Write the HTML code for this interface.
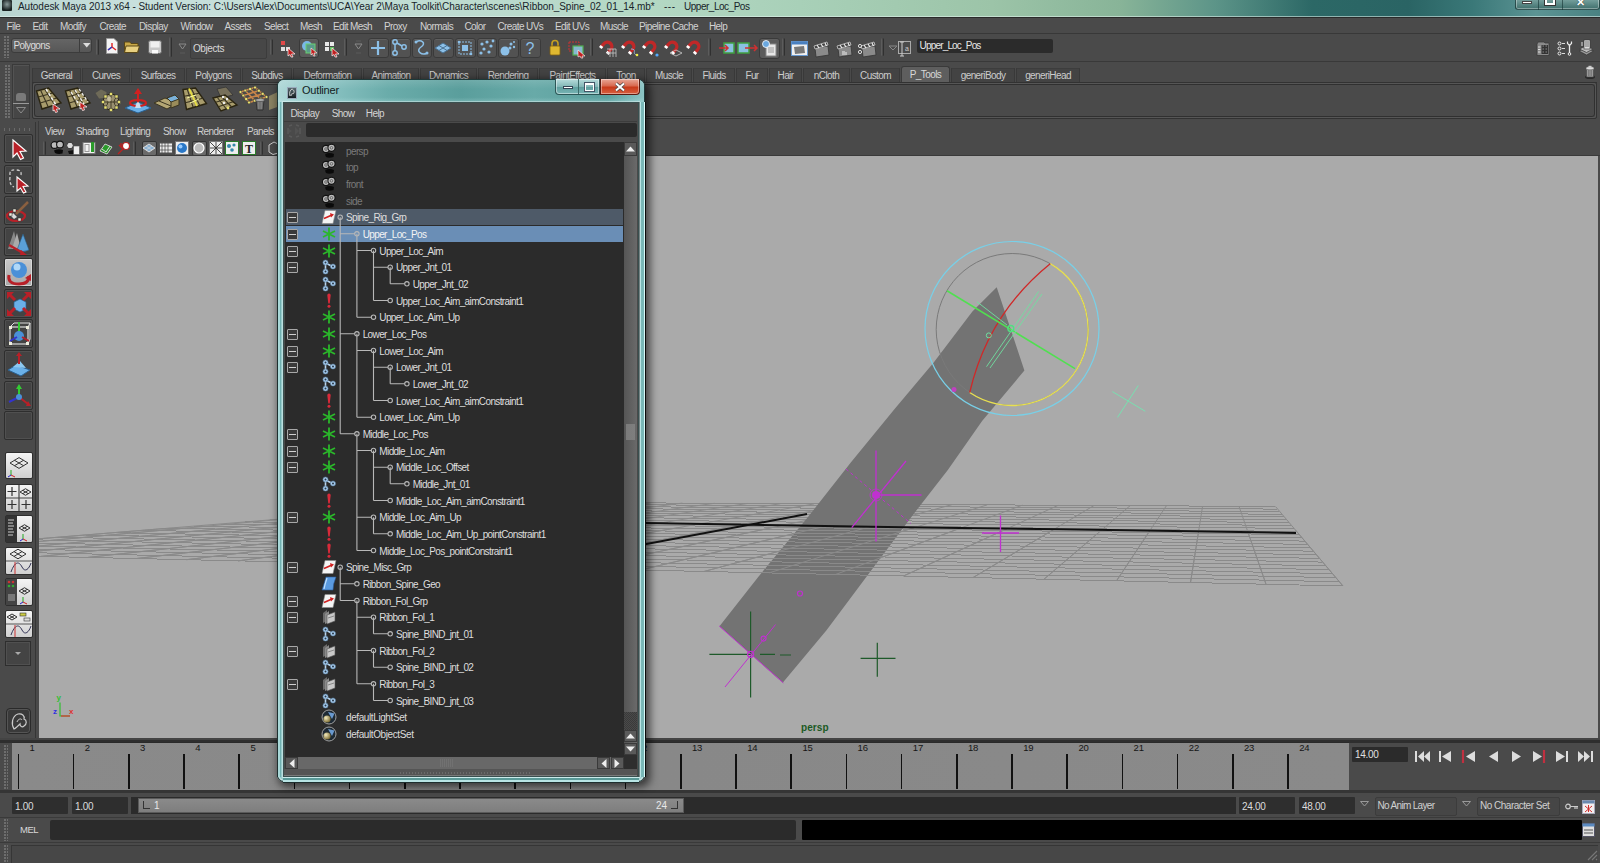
<!DOCTYPE html><html><head><meta charset="utf-8"><style>*{margin:0;padding:0;box-sizing:border-box}
html,body{width:1600px;height:863px;overflow:hidden;background:#4a4a4a;font-family:"Liberation Sans",sans-serif;font-size:10px;color:#cfcfcf;position:relative}
.a{position:absolute}
svg.a{overflow:visible}
.t{position:absolute;white-space:pre;letter-spacing:-0.6px;line-height:12px;font-size:10px}
#title{left:0;top:0;width:1600px;height:18px;overflow:hidden;background:linear-gradient(90deg,#b8d4d0 0%,#c8e0dc 8%,#c0dcd4 25%,#b4d8c4 40%,#a8d0b8 50%,#9cc4a8 62%,#88b498 70%,#5c9488 76%,#2c6866 82%,#2a6464 88%,#3a7878 92%,#5c9494 96%,#4a8282 100%)}
#menubar{left:0;top:18px;width:1600px;height:15px;background:#4a4a4a}
#status{left:0;top:33px;width:1600px;height:28px;background:#4a4a4a}
#shelf{left:0;top:61px;width:1600px;height:60px;background:#4a4a4a}
#tool{left:0;top:121px;width:38px;height:617px;background:#4a4a4a}
#panelmenu{left:38px;top:121px;width:1562px;height:35px;background:#4a4a4a}
#vp{left:39px;top:156px;width:1559px;height:582px;background:#aaaaaa}
#timeline{left:0;top:738px;width:1600px;height:125px;background:#4a4a4a}
</style></head><body><div class="a" id="title"><div class="a" style="left:2px;top:0px;width:10px;height:11px;background:radial-gradient(circle at 50% 40%,#8a9a9a,#1a2222 70%);border-radius:1px"></div><div class="t" style="left:18px;top:0.5px;color:#18242a;font-size:10px;letter-spacing:-0.05px;">Autodesk Maya 2013 x64 - Student Version: C:\Users\Alex\Documents\UCA\Year 2\Maya Toolkit\Character\scenes\Ribbon_Spine_02_01_14.mb*</div><div class="t" style="left:664px;top:0.5px;color:#18242a;font-size:10px;letter-spacing:0.5px;">---</div><div class="t" style="left:684px;top:0.5px;color:#18242a;font-size:10px;letter-spacing:-0.48px;">Upper_Loc_Pos</div><div class="a" style="left:1515px;top:-3px;width:85px;height:13px;border:1px solid rgba(20,50,50,.7);border-radius:3px;background:linear-gradient(#7fa9a6,#3f6f6c);box-shadow:inset 0 0 0 1px rgba(255,255,255,.35)"></div><div class="a" style="left:1538px;top:-2px;width:1px;height:12px;background:rgba(20,50,50,.6)"></div><div class="a" style="left:1562px;top:-2px;width:1px;height:12px;background:rgba(20,50,50,.6)"></div><div class="a" style="left:1522px;top:1px;width:10px;height:3px;background:#fff;border:1px solid #444"></div><div class="a" style="left:1545px;top:-2px;width:10px;height:7px;border:2px solid #fff;outline:1px solid #333"></div><div class="t" style="left:1576px;top:-4px;color:#fff;font-size:11px;letter-spacing:0px;font-weight:bold;text-shadow:0 0 1px #000">✕</div><div class="a" style="left:0px;top:16px;width:1600px;height:1px;background:rgba(230,245,240,.55)"></div><div class="a" style="left:0px;top:17px;width:1600px;height:1px;background:#2a2a2a"></div></div><div class="a" id="menubar"><div class="t" style="left:6.5px;top:3px;color:#d2d2d2;">File</div><div class="t" style="left:32.5px;top:3px;color:#d2d2d2;">Edit</div><div class="t" style="left:60px;top:3px;color:#d2d2d2;">Modify</div><div class="t" style="left:99.5px;top:3px;color:#d2d2d2;">Create</div><div class="t" style="left:139px;top:3px;color:#d2d2d2;">Display</div><div class="t" style="left:180.5px;top:3px;color:#d2d2d2;">Window</div><div class="t" style="left:224.5px;top:3px;color:#d2d2d2;">Assets</div><div class="t" style="left:264px;top:3px;color:#d2d2d2;">Select</div><div class="t" style="left:300px;top:3px;color:#d2d2d2;">Mesh</div><div class="t" style="left:333px;top:3px;color:#d2d2d2;">Edit Mesh</div><div class="t" style="left:384px;top:3px;color:#d2d2d2;">Proxy</div><div class="t" style="left:420px;top:3px;color:#d2d2d2;">Normals</div><div class="t" style="left:464.5px;top:3px;color:#d2d2d2;">Color</div><div class="t" style="left:497.5px;top:3px;color:#d2d2d2;">Create UVs</div><div class="t" style="left:555px;top:3px;color:#d2d2d2;">Edit UVs</div><div class="t" style="left:600px;top:3px;color:#d2d2d2;">Muscle</div><div class="t" style="left:639px;top:3px;color:#d2d2d2;">Pipeline Cache</div><div class="t" style="left:709px;top:3px;color:#d2d2d2;">Help</div></div><div class="a" id="status"><div class="a" style="left:0px;top:0px;width:1600px;height:1px;background:#383838"></div><div class="a" style="left:4px;top:3px;width:5px;height:22px;background:radial-gradient(circle at 1px 1px,#6e6e6e 0.9px,transparent 1.2px) 0 0/3px 3px"></div><div class="a" style="left:11px;top:5px;width:81px;height:15px;background:linear-gradient(#656565,#575757);border:1px solid #3c3c3c;border-radius:3px"></div><div class="a" style="left:79px;top:6px;width:1px;height:13px;background:#3c3c3c"></div><div class="t" style="left:13.5px;top:6.5px;color:#dcdcdc;font-size:10px;letter-spacing:-0.63px;">Polygons</div><svg class="a" style="left:82.5px;top:10px" width="8" height="5"><path d="M0 0H7.5L3.75 4.5Z" fill="#ddd"/></svg><div class="a" style="left:96px;top:6px;width:3px;height:16px;border-left:1px solid #5c5c5c;border-right:1px solid #303030;border-radius:2px"></div><svg class="a" style="left:106px;top:5px" width="12" height="16"><path d="M0.5 0.5H8L11.5 4V15.5H0.5Z" fill="#f4f4f4" stroke="#999"/><path d="M6 5V9L2 12M6 9L10 12" stroke="#e02020" stroke-width="1.4" fill="none"/><path d="M6 9L2 12" stroke="#2040d0" stroke-width="1.4"/></svg><svg class="a" style="left:124px;top:7px" width="16" height="13"><path d="M0.5 2H6L7 3.5H14V12.5H0.5Z" fill="#c8a848" stroke="#5a4818"/><path d="M2 6H15.5L13.5 12.5H0.5Z" fill="#e8d080" stroke="#5a4818"/></svg><svg class="a" style="left:148px;top:7px" width="14" height="14"><rect x="0.5" y="0.5" width="13" height="13" rx="2" fill="#c8c8c8" stroke="#666"/><rect x="2.5" y="1.5" width="9" height="6" fill="#f0f0f0"/><rect x="4" y="10" width="6" height="3.5" fill="#fafafa"/></svg><div class="a" style="left:169px;top:4px;width:3px;height:20px;border-left:1px solid #5c5c5c;border-right:1px solid #303030;border-radius:2px"></div><svg class="a" style="left:178px;top:7px" width="9" height="16"><path d="M1 4H8L4.5 9Z" fill="none" stroke="#8a8a8a"/><path d="M2 1H7M2 13H7" stroke="#5a5a5a"/></svg><div class="a" style="left:190px;top:4.5px;width:77px;height:21px;border:1px solid #3c3c3c;border-radius:2px;background:#474747"></div><div class="t" style="left:193px;top:10px;color:#d8d8d8;font-size:10px;letter-spacing:-0.41px;">Objects</div><div class="a" style="left:270px;top:6px;width:3px;height:16px;border-left:1px solid #5c5c5c;border-right:1px solid #303030;border-radius:2px"></div><svg class="a" style="left:280px;top:8px" width="16" height="16"><rect x="1" y="0" width="4" height="4" fill="#e04848"/><rect x="1" y="6" width="4" height="4" fill="#ddd"/><rect x="6" y="6" width="4" height="4" fill="#ddd"/><path d="M8 7L15 13L11.5 13L13 16L11 16L10 13.5L8 15Z" fill="#c02020" stroke="#fff" stroke-width=".7"/></svg><div class="a" style="left:299px;top:4.5px;width:20px;height:20px;background:#5b5b5b;border:1px solid #3a3a3a;border-radius:3px;box-shadow:inset 0 1px 0 #5f5f5f"></div><svg class="a" style="left:301px;top:7px" width="18" height="16"><circle cx="6" cy="6" r="5" fill="#7ab8e8"/><rect x="5" y="4" width="9" height="9" fill="#5a9a8a" stroke="#6ad070"/><path d="M10 8L16 13L13 13L14 16L12.5 16L11.5 13.5L10 15Z" fill="#c02020" stroke="#fff" stroke-width=".6"/></svg><svg class="a" style="left:324px;top:8px" width="16" height="16"><rect x="1" y="1" width="4" height="4" fill="#e8e8e8"/><rect x="6" y="1" width="4" height="4" fill="#e8e8e8"/><rect x="1" y="6" width="4" height="4" fill="#e8e8e8"/><rect x="6" y="6" width="4" height="4" fill="#60c060"/><path d="M8 7L15 13L11.5 13L13 16L11 16L10 13.5L8 15Z" fill="#c02020" stroke="#fff" stroke-width=".7"/></svg><div class="a" style="left:344px;top:5px;width:3px;height:18px;border-left:1px solid #5c5c5c;border-right:1px solid #303030;border-radius:2px"></div><svg class="a" style="left:354px;top:7px" width="9" height="16"><path d="M1 4H8L4.5 9Z" fill="none" stroke="#8a8a8a"/><path d="M2 1H7M2 13H7" stroke="#5a5a5a"/></svg><div class="a" style="left:368px;top:4.5px;width:20.5px;height:20px;background:#525252;border:1px solid #3a3a3a;border-radius:3px;box-shadow:inset 0 1px 0 #5f5f5f"></div><div class="a" style="left:390px;top:4.5px;width:20.5px;height:20px;background:#525252;border:1px solid #3a3a3a;border-radius:3px;box-shadow:inset 0 1px 0 #5f5f5f"></div><div class="a" style="left:411.5px;top:4.5px;width:20.5px;height:20px;background:#525252;border:1px solid #3a3a3a;border-radius:3px;box-shadow:inset 0 1px 0 #5f5f5f"></div><div class="a" style="left:433px;top:4.5px;width:20.5px;height:20px;background:#525252;border:1px solid #3a3a3a;border-radius:3px;box-shadow:inset 0 1px 0 #5f5f5f"></div><div class="a" style="left:455px;top:4.5px;width:20.5px;height:20px;background:#525252;border:1px solid #3a3a3a;border-radius:3px;box-shadow:inset 0 1px 0 #5f5f5f"></div><div class="a" style="left:476.5px;top:4.5px;width:20.5px;height:20px;background:#525252;border:1px solid #3a3a3a;border-radius:3px;box-shadow:inset 0 1px 0 #5f5f5f"></div><div class="a" style="left:498px;top:4.5px;width:20.5px;height:20px;background:#525252;border:1px solid #3a3a3a;border-radius:3px;box-shadow:inset 0 1px 0 #5f5f5f"></div><div class="a" style="left:520px;top:4.5px;width:20.5px;height:20px;background:#525252;border:1px solid #3a3a3a;border-radius:3px;box-shadow:inset 0 1px 0 #5f5f5f"></div><svg class="a" style="left:368px;top:4.5px" width="20" height="20"><path d="M10 3V17M3 10H17" stroke="#8cc0e8" stroke-width="2.2"/></svg><svg class="a" style="left:390px;top:4.5px" width="20" height="20"><circle cx="5" cy="4" r="2.2" fill="none" stroke="#8cc0e8" stroke-width="1.5"/><circle cx="5" cy="15" r="2.2" fill="none" stroke="#8cc0e8" stroke-width="1.5"/><circle cx="14" cy="9" r="2.2" fill="none" stroke="#8cc0e8" stroke-width="1.5"/><path d="M5 6V13M7 5L12 8" stroke="#8cc0e8" stroke-width="1.5"/></svg><svg class="a" style="left:411.5px;top:4.5px" width="20" height="20"><path d="M4 4C9 1 15 5 9 9C3 13 10 18 15 15" fill="none" stroke="#8cc0e8" stroke-width="1.5"/><circle cx="4" cy="4" r="1.5" fill="#8cc0e8"/><circle cx="15" cy="15" r="1.5" fill="#8cc0e8"/></svg><svg class="a" style="left:433px;top:4.5px" width="20" height="20"><path d="M2 10L10 5L18 10L10 15Z" fill="#8cc0e8" stroke="#4a7090"/><path d="M6 7.5L14 12.5M14 7.5L6 12.5" stroke="#4a7090"/></svg><svg class="a" style="left:455px;top:4.5px" width="20" height="20"><rect x="4" y="4" width="12" height="12" fill="none" stroke="#8cc0e8" stroke-dasharray="2 1"/><rect x="7" y="7" width="6" height="6" fill="#8cc0e8"/><circle cx="4" cy="4" r="1.3" fill="#8cc0e8"/><circle cx="16" cy="16" r="1.3" fill="#8cc0e8"/></svg><svg class="a" style="left:476.5px;top:4.5px" width="20" height="20"><circle cx="5" cy="6" r="1.6" fill="#8cc0e8"/><circle cx="10" cy="4" r="1.6" fill="#8cc0e8"/><circle cx="14" cy="8" r="1.6" fill="#8cc0e8"/><circle cx="7" cy="11" r="1.6" fill="#8cc0e8"/><circle cx="12" cy="14" r="1.6" fill="#8cc0e8"/><circle cx="4" cy="15" r="1.6" fill="#8cc0e8"/><circle cx="16" cy="3" r="1.4" fill="#8cc0e8"/></svg><svg class="a" style="left:498px;top:4.5px" width="20" height="20"><circle cx="7" cy="13" r="4.5" fill="#8cc0e8"/><circle cx="13" cy="6" r="1.5" fill="#8cc0e8"/><circle cx="16" cy="9" r="1.2" fill="#8cc0e8"/><circle cx="12" cy="10" r="1.5" fill="#8cc0e8"/><circle cx="16" cy="4" r="1" fill="#8cc0e8"/></svg><svg class="a" style="left:520px;top:4.5px" width="20" height="20"><text x="10" y="16" font-size="16" text-anchor="middle" fill="#8cc0e8" font-family="Liberation Sans">?</text></svg><svg class="a" style="left:549px;top:6px" width="12" height="17"><path d="M3 7V4.5A3 3 0 0 1 9 4.5V7" fill="none" stroke="#c8a020" stroke-width="1.6"/><rect x="1" y="7" width="10" height="9" rx="1" fill="#e0b830" stroke="#806010" stroke-width=".8"/></svg><svg class="a" style="left:568px;top:8px" width="18" height="17"><rect x="1" y="1" width="10" height="9" fill="none" stroke="#d03030" stroke-dasharray="2 1"/><rect x="5" y="5" width="10" height="9" fill="#88b8d0" stroke="#50b050" stroke-width="1.2"/><path d="M10 9L17 15L14 15L15 17L13 17L12 15L10 16Z" fill="#c02020" stroke="#fff" stroke-width=".6"/></svg><div class="a" style="left:590px;top:5px;width:3px;height:18px;border-left:1px solid #5c5c5c;border-right:1px solid #303030;border-radius:2px"></div><svg class="a" style="left:599px;top:6px" width="18" height="18"><g transform="rotate(40 8 8)"><path d="M3.5 12V7.5A4.5 4.5 0 0 1 12.5 7.5V12" stroke="#c02828" stroke-width="3.4" fill="none"/><rect x="1.8" y="10.5" width="3.4" height="2.6" fill="#fff"/><rect x="10.8" y="10.5" width="3.4" height="2.6" fill="#fff"/></g><path d="M8 10H17V18M8 14H17M11 10V18M14 10V18" stroke="#c8c8c8" stroke-width=".8" fill="none"/></svg><svg class="a" style="left:621px;top:6px" width="18" height="18"><g transform="rotate(40 8 8)"><path d="M3.5 12V7.5A4.5 4.5 0 0 1 12.5 7.5V12" stroke="#c02828" stroke-width="3.4" fill="none"/><rect x="1.8" y="10.5" width="3.4" height="2.6" fill="#fff"/><rect x="10.8" y="10.5" width="3.4" height="2.6" fill="#fff"/></g><path d="M10 10C17 10 10 15 16 16" stroke="#9ac" stroke-width="1" fill="none"/><circle cx="16" cy="16" r="1.3" fill="#ee4"/></svg><svg class="a" style="left:642px;top:6px" width="18" height="18"><g transform="rotate(40 8 8)"><path d="M3.5 12V7.5A4.5 4.5 0 0 1 12.5 7.5V12" stroke="#c02828" stroke-width="3.4" fill="none"/><rect x="1.8" y="10.5" width="3.4" height="2.6" fill="#fff"/><rect x="10.8" y="10.5" width="3.4" height="2.6" fill="#fff"/></g><circle cx="15" cy="16" r="1.6" fill="#5af"/></svg><svg class="a" style="left:664px;top:6px" width="18" height="18"><g transform="rotate(40 8 8)"><path d="M3.5 12V7.5A4.5 4.5 0 0 1 12.5 7.5V12" stroke="#c02828" stroke-width="3.4" fill="none"/><rect x="1.8" y="10.5" width="3.4" height="2.6" fill="#fff"/><rect x="10.8" y="10.5" width="3.4" height="2.6" fill="#fff"/></g><path d="M6 14L12 11L18 14L12 17Z" fill="none" stroke="#ccc" stroke-width=".8"/></svg><svg class="a" style="left:686px;top:6px" width="18" height="18"><g transform="rotate(40 8 8)"><path d="M3.5 12V7.5A4.5 4.5 0 0 1 12.5 7.5V12" stroke="#c02828" stroke-width="3.4" fill="none"/><rect x="1.8" y="10.5" width="3.4" height="2.6" fill="#fff"/><rect x="10.8" y="10.5" width="3.4" height="2.6" fill="#fff"/></g></svg><div class="a" style="left:708px;top:5px;width:3px;height:18px;border-left:1px solid #5c5c5c;border-right:1px solid #303030;border-radius:2px"></div><svg class="a" style="left:719px;top:9px" width="16" height="13"><rect x="5" y="1" width="10" height="10" fill="#8ac0e0" stroke="#40a040" stroke-width="1.5"/><path d="M0 6H9M6 3L9 6L6 9" stroke="#d03030" stroke-width="1.5" fill="none"/></svg><svg class="a" style="left:737px;top:9px" width="21" height="13"><rect x="1" y="1" width="11" height="10" fill="#8ac0e0" stroke="#40a040" stroke-width="1.5"/><path d="M8 6H20M17 3L20 6L17 9" stroke="#d03030" stroke-width="1.5" fill="none"/></svg><div class="a" style="left:759px;top:4.5px;width:21px;height:21px;background:#5b5b5b;border:1px solid #3a3a3a;border-radius:3px;box-shadow:inset 0 1px 0 #5f5f5f"></div><svg class="a" style="left:762px;top:7px" width="16" height="17"><rect x="4" y="4" width="10" height="12" fill="#e8e8e8" stroke="#888"/><path d="M6 8H12M6 10H12M6 12H12" stroke="#999"/><circle cx="4" cy="4" r="3.5" fill="#6aa8e0" stroke="#fff" stroke-width=".8"/></svg><div class="a" style="left:782px;top:5px;width:3px;height:18px;border-left:1px solid #5c5c5c;border-right:1px solid #303030;border-radius:2px"></div><svg class="a" style="left:791px;top:8px" width="17" height="15"><rect x="0.5" y="0.5" width="16" height="14" fill="#f0f0f0" stroke="#6a9ad0"/><rect x="0.5" y="0.5" width="16" height="3" fill="#4a80c0"/><path d="M3 6L13 5L14 12L4 13Z" fill="#777"/></svg><svg class="a" style="left:813px;top:7px" width="18" height="18"><path d="M2 8L15 6L16 15L3 17Z" fill="#8a8a8a" stroke="#333" stroke-width=".8"/><path d="M1 6L14 2L15 5L2 9Z" fill="#444" stroke="#ccc" stroke-width=".8"/><path d="M4 5L6 8M8 4L10 7M12 3L13.5 6" stroke="#eee" stroke-width="1.2"/></svg><svg class="a" style="left:836px;top:7px" width="18" height="18"><path d="M2 8L15 6L16 15L3 17Z" fill="#8a8a8a" stroke="#333" stroke-width=".8"/><path d="M1 6L14 2L15 5L2 9Z" fill="#444" stroke="#ccc" stroke-width=".8"/><path d="M4 5L6 8M8 4L10 7M12 3L13.5 6" stroke="#eee" stroke-width="1.2"/><path d="M6 12H9M6 14H9M10 12V15" stroke="#eee"/></svg><svg class="a" style="left:858px;top:7px" width="18" height="18"><g transform="translate(2,0)"><path d="M2 8L15 6L16 15L3 17Z" fill="#8a8a8a" stroke="#333" stroke-width=".8"/><path d="M1 6L14 2L15 5L2 9Z" fill="#444" stroke="#ccc" stroke-width=".8"/><path d="M4 5L6 8M8 4L10 7M12 3L13.5 6" stroke="#eee" stroke-width="1.2"/></g><circle cx="2" cy="6" r="1.6" fill="none" stroke="#ddd"/><circle cx="2" cy="12" r="1.6" fill="none" stroke="#ddd"/></svg><div class="a" style="left:881px;top:5px;width:3px;height:18px;border-left:1px solid #5c5c5c;border-right:1px solid #303030;border-radius:2px"></div><svg class="a" style="left:889px;top:13px" width="8" height="6"><path d="M0 0H8L4 4Z" fill="none" stroke="#888"/></svg><svg class="a" style="left:898px;top:7px" width="14" height="18"><rect x="0.5" y="1.5" width="12" height="12" fill="none" stroke="#aaa"/><path d="M4 2V16M2 2H6M2 16H6" stroke="#ccc"/><text x="7" y="11" font-size="7" fill="#ccc" font-family="Liberation Sans">a</text></svg><div class="a" style="left:917px;top:5.5px;width:136px;height:14px;background:#2b2b2b;border-radius:2px"></div><div class="t" style="left:919.5px;top:6.5px;color:#e8e8e8;font-size:10px;letter-spacing:-0.82px;">Upper_Loc_Pos</div><svg class="a" style="left:1536px;top:7px" width="16" height="17"><path d="M1 4L2 2H8L9 3H13V15.5H1Z" fill="#8a8a8a" stroke="#3a3a3a" stroke-width=".8"/><rect x="5.5" y="5" width="6.5" height="9" fill="#333"/><path d="M6.5 6H8M9.5 6H11M6.5 9H8M9.5 9H11M6.5 12H8M9.5 12H11" stroke="#888" stroke-width="1.2"/><path d="M2 7H4.5M2 9.5H4.5M2 12H4.5" stroke="#ddd" stroke-width="1"/></svg><svg class="a" style="left:1557px;top:7px" width="16" height="17"><circle cx="2.5" cy="3.5" r="1.5" fill="none" stroke="#eee" stroke-width="1"/><circle cx="2.5" cy="8.5" r="1.5" fill="none" stroke="#eee" stroke-width="1"/><circle cx="2.5" cy="13.5" r="1.5" fill="none" stroke="#eee" stroke-width="1"/><path d="M5 3.5H8M5 8.5H8M5 13.5H8" stroke="#ddd" stroke-width="1.2"/><path d="M12.5 5V13" stroke="#eee" stroke-width="1.3"/><path d="M10.5 1.5V3.5L12.5 5.5L14.5 3.5V1.5" fill="none" stroke="#eee" stroke-width="1.2"/><circle cx="12.5" cy="14" r="1.3" fill="none" stroke="#eee"/></svg><svg class="a" style="left:1578px;top:6px" width="17" height="18"><path d="M1 12L8 9L15.5 12L8.5 16Z" fill="#999" stroke="#333" stroke-width=".7"/><path d="M1.5 10L8 7L15 10L8.5 13.5Z" fill="#bbb" stroke="#333" stroke-width=".7"/><rect x="6" y="1" width="6" height="9" fill="#ddd" stroke="#333" stroke-width=".6"/><path d="M7 3H11M7 5H11M7 7H11" stroke="#555" stroke-width=".8"/><path d="M3 4H5M3 6H5" stroke="#ddd" stroke-width="1.2"/></svg></div><div class="a" id="shelf"><div class="a" style="left:0px;top:0px;width:1600px;height:1px;background:#393939"></div><div class="a" style="left:5px;top:4px;width:5px;height:53px;background:radial-gradient(circle at 1px 1px,#6e6e6e 0.9px,transparent 1.2px) 0 0/3px 3px"></div><div class="a" style="left:12px;top:3px;width:18px;height:55px;border:1px solid #3a3a3a;background:#464646;box-shadow:inset 1px 1px 0 #535353"></div><div class="a" style="left:15.5px;top:31.5px;width:10.5px;height:8px;background:#7a7a7a;border-radius:3px 3px 1px 1px"></div><div class="a" style="left:13px;top:42px;width:16px;height:1px;background:#9a9a9a"></div><svg class="a" style="left:16px;top:46px" width="10" height="7"><path d="M0.5 0.5H9.5L5 6Z" fill="none" stroke="#8a8a8a"/></svg><div class="a" style="left:32px;top:7px;width:49px;height:14px;background:#434343;border-left:1px solid #393939;border-right:1px solid #393939;border-top:1px solid #3d3d3d"></div><div class="t" style="left:32px;top:9px;width:49px;text-align:center;color:#cccccc">General</div><div class="a" style="left:82px;top:7px;width:48px;height:14px;background:#434343;border-left:1px solid #393939;border-right:1px solid #393939;border-top:1px solid #3d3d3d"></div><div class="t" style="left:82px;top:9px;width:48px;text-align:center;color:#cccccc">Curves</div><div class="a" style="left:131px;top:7px;width:54px;height:14px;background:#434343;border-left:1px solid #393939;border-right:1px solid #393939;border-top:1px solid #3d3d3d"></div><div class="t" style="left:131px;top:9px;width:54px;text-align:center;color:#cccccc">Surfaces</div><div class="a" style="left:186px;top:7px;width:55px;height:14px;background:#434343;border-left:1px solid #393939;border-right:1px solid #393939;border-top:1px solid #3d3d3d"></div><div class="t" style="left:186px;top:9px;width:55px;text-align:center;color:#cccccc">Polygons</div><div class="a" style="left:242px;top:7px;width:50px;height:14px;background:#434343;border-left:1px solid #393939;border-right:1px solid #393939;border-top:1px solid #3d3d3d"></div><div class="t" style="left:242px;top:9px;width:50px;text-align:center;color:#cccccc">Subdivs</div><div class="a" style="left:293px;top:7px;width:69px;height:14px;background:#434343;border-left:1px solid #393939;border-right:1px solid #393939;border-top:1px solid #3d3d3d"></div><div class="t" style="left:293px;top:9px;width:69px;text-align:center;color:#cccccc">Deformation</div><div class="a" style="left:363px;top:7px;width:56px;height:14px;background:#434343;border-left:1px solid #393939;border-right:1px solid #393939;border-top:1px solid #3d3d3d"></div><div class="t" style="left:363px;top:9px;width:56px;text-align:center;color:#cccccc">Animation</div><div class="a" style="left:420px;top:7px;width:57px;height:14px;background:#434343;border-left:1px solid #393939;border-right:1px solid #393939;border-top:1px solid #3d3d3d"></div><div class="t" style="left:420px;top:9px;width:57px;text-align:center;color:#cccccc">Dynamics</div><div class="a" style="left:478px;top:7px;width:60px;height:14px;background:#434343;border-left:1px solid #393939;border-right:1px solid #393939;border-top:1px solid #3d3d3d"></div><div class="t" style="left:478px;top:9px;width:60px;text-align:center;color:#cccccc">Rendering</div><div class="a" style="left:539px;top:7px;width:67px;height:14px;background:#434343;border-left:1px solid #393939;border-right:1px solid #393939;border-top:1px solid #3d3d3d"></div><div class="t" style="left:539px;top:9px;width:67px;text-align:center;color:#cccccc">PaintEffects</div><div class="a" style="left:607px;top:7px;width:38px;height:14px;background:#434343;border-left:1px solid #393939;border-right:1px solid #393939;border-top:1px solid #3d3d3d"></div><div class="t" style="left:607px;top:9px;width:38px;text-align:center;color:#cccccc">Toon</div><div class="a" style="left:646px;top:7px;width:46px;height:14px;background:#434343;border-left:1px solid #393939;border-right:1px solid #393939;border-top:1px solid #3d3d3d"></div><div class="t" style="left:646px;top:9px;width:46px;text-align:center;color:#cccccc">Muscle</div><div class="a" style="left:693px;top:7px;width:42px;height:14px;background:#434343;border-left:1px solid #393939;border-right:1px solid #393939;border-top:1px solid #3d3d3d"></div><div class="t" style="left:693px;top:9px;width:42px;text-align:center;color:#cccccc">Fluids</div><div class="a" style="left:736px;top:7px;width:32px;height:14px;background:#434343;border-left:1px solid #393939;border-right:1px solid #393939;border-top:1px solid #3d3d3d"></div><div class="t" style="left:736px;top:9px;width:32px;text-align:center;color:#cccccc">Fur</div><div class="a" style="left:769px;top:7px;width:33px;height:14px;background:#434343;border-left:1px solid #393939;border-right:1px solid #393939;border-top:1px solid #3d3d3d"></div><div class="t" style="left:769px;top:9px;width:33px;text-align:center;color:#cccccc">Hair</div><div class="a" style="left:803px;top:7px;width:47px;height:14px;background:#434343;border-left:1px solid #393939;border-right:1px solid #393939;border-top:1px solid #3d3d3d"></div><div class="t" style="left:803px;top:9px;width:47px;text-align:center;color:#cccccc">nCloth</div><div class="a" style="left:851px;top:7px;width:49px;height:14px;background:#434343;border-left:1px solid #393939;border-right:1px solid #393939;border-top:1px solid #3d3d3d"></div><div class="t" style="left:851px;top:9px;width:49px;text-align:center;color:#cccccc">Custom</div><div class="a" style="left:901px;top:5px;width:49px;height:16px;background:#5e5e5e;border:1px solid #3a3a3a;border-bottom:none;border-radius:3px 3px 0 0"></div><div class="t" style="left:901px;top:7.5px;width:49px;text-align:center;color:#d8d8d8">P_Tools</div><div class="a" style="left:951px;top:7px;width:64px;height:14px;background:#434343;border-left:1px solid #393939;border-right:1px solid #393939;border-top:1px solid #3d3d3d"></div><div class="t" style="left:951px;top:9px;width:64px;text-align:center;color:#cccccc">generiBody</div><div class="a" style="left:1016px;top:7px;width:64px;height:14px;background:#434343;border-left:1px solid #393939;border-right:1px solid #393939;border-top:1px solid #3d3d3d"></div><div class="t" style="left:1016px;top:9px;width:64px;text-align:center;color:#cccccc">generiHead</div><div class="a" style="left:32px;top:21px;width:1565px;height:1px;background:#353535"></div><div class="a" style="left:32px;top:21px;width:1565px;height:37px;border:1px solid #323232;border-radius:2px"></div><div class="a" style="left:33px;top:22px;width:1563px;height:35px;border:1px solid #565656;border-radius:2px"></div><div class="a" style="left:34px;top:23px;width:1561px;height:33px;border:1px solid #303030;border-radius:3px"></div><div class="a" style="left:0px;top:59.5px;width:1600px;height:1px;background:#3a3a3a"></div><svg class="a" style="left:1584px;top:4px" width="12" height="14"><ellipse cx="6" cy="12" rx="5" ry="2" fill="#2a2a2a"/><path d="M2.5 3.5V12H9.5V3.5Z" fill="#999" stroke="#444" stroke-width=".6"/><path d="M4.5 5V11M6 5V11M7.5 5V11" stroke="#666" stroke-width=".6"/><ellipse cx="6" cy="3.2" rx="4" ry="1.6" fill="#ddd" stroke="#555" stroke-width=".5"/><rect x="4.5" y="0.8" width="3" height="1.6" fill="#ccc"/></svg><svg class="a" style="left:36px;top:25px" width="28" height="28"><path d="M0.5 5L12.5 2L25 17L6 23Z" fill="#a89c6c" stroke="#2a2410" stroke-width="1.4"/><path d="M4.5 4.0L12.3 21.0M2.3 11.0L16.7 7.0M8.5 3.0L18.7 19.0M4.2 17.0L20.8 12.0" stroke="#3a3420" stroke-width="1.1" fill="none"/><path d="M10 3L20 19" stroke="#f4f4f4" stroke-width="1.5" stroke-dasharray="3 2"/><path d="M17 18L24 23L20.5 23L21.5 26L19.5 26.5L18.5 24L17 25Z" fill="#c02020" stroke="#fff" stroke-width=".7"/></svg><svg class="a" style="left:65px;top:25px" width="28" height="28"><path d="M0.5 5L12.5 2L25 17L6 23Z" fill="#a89c6c" stroke="#2a2410" stroke-width="1.4"/><path d="M4.5 4.0L12.3 21.0M2.3 11.0L16.7 7.0M8.5 3.0L18.7 19.0M4.2 17.0L20.8 12.0" stroke="#3a3420" stroke-width="1.1" fill="none"/><path d="M6 6L15 20M10 4L19 18M14 3L23 16" stroke="#f4f4f4" stroke-width="1.3" stroke-dasharray="3 2"/><path d="M15 16L22 21L18.5 21L19.5 24L17.5 24.5L16.5 22L15 23Z" fill="#c02020" stroke="#fff" stroke-width=".7"/></svg><svg class="a" style="left:94px;top:25px" width="28" height="28"><path d="M1 7L7 3L13 6L12 12L5 13Z" fill="#6e6a58" stroke="#444" stroke-width=".6"/><circle cx="17" cy="16" r="8" fill="#9a9070" stroke="#2a2410" stroke-width="1"/><path d="M9 16H25M17 8V24M11 11Q17 16 11 21M23 11Q17 16 23 21" stroke="#3a3420" fill="none" stroke-width=".9"/><circle cx="15" cy="13" r="2.5" fill="#d8d0b0" opacity=".7"/><g fill="#e8e070" stroke="#333" stroke-width=".5"><rect x="15.5" y="6.5" width="3" height="3"/><rect x="7.5" y="14.5" width="3" height="3"/><rect x="23.5" y="14.5" width="3" height="3"/><rect x="15.5" y="22.5" width="3" height="3"/><rect x="10" y="9" width="3" height="3"/><rect x="21" y="9" width="3" height="3"/><rect x="10" y="20" width="3" height="3"/><rect x="21" y="20" width="3" height="3"/></g></svg><svg class="a" style="left:124px;top:25px" width="28" height="28"><path d="M1 22L14 16L27 22L14 27Z" fill="#6ab0e8" stroke="#2a6090"/><ellipse cx="14" cy="17" rx="8" ry="3" fill="none" stroke="#d02020" stroke-width="2"/><path d="M14 19V6" stroke="#d02020" stroke-width="2"/><path d="M10 8L14 2L18 8Z" fill="#d02020"/><path d="M11 22Q14 10 17 22Z" fill="#cde"/></svg><svg class="a" style="left:153px;top:25px" width="28" height="28"><path d="M1 17L12 12L25 17L14 23Z" fill="#b4a674" stroke="#3a3420"/><path d="M14 12L22 9L26 13V19L18 22V15Z" fill="#9a8c5a" stroke="#3a3420"/><path d="M14 12L22 9L26 13L18 16Z" fill="#7ab0d8" stroke="#3a3420"/><path d="M6 15L18 20" stroke="#3a3420"/></svg><svg class="a" style="left:182px;top:25px" width="28" height="28"><path d="M1 3.5L13.5 2L24.5 17.5L4.5 23.5Z" fill="#a89c6c" stroke="#2a2410" stroke-width="1.4"/><path d="M5.2 3.0L11.2 21.5M2.2 10.2L17.2 7.2M9.3 2.5L17.8 19.5M3.3 16.8L20.8 12.3" stroke="#3a3420" stroke-width="1.1" fill="none"/><path d="M7 2.5L15 20" stroke="#e8e040" stroke-width="1.8"/><path d="M5 12L14 9M8 17L17 13" stroke="#f8f8a0" stroke-width="1"/></svg><svg class="a" style="left:211px;top:25px" width="28" height="28"><path d="M6 3L15 1L22 9L10 12Z" fill="#77705a" stroke="#333" stroke-width=".8"/><path d="M2 12L14 9L26 19L10 25Z" fill="#a89c6c" stroke="#2a2410" stroke-width="1.4"/><path d="M6.0 11.0L15.3 23.0M4.7 16.3L18.0 12.3M10.0 10.0L20.7 21.0M7.3 20.7L22.0 15.7" stroke="#3a3420" stroke-width="1.1" fill="none"/><circle cx="12" cy="11" r="1.2" fill="#eee"/><circle cx="16" cy="13" r="1.2" fill="#eee"/><circle cx="13" cy="17" r="1.2" fill="#eee"/><circle cx="17" cy="22" r="1.4" fill="#e8e070"/></svg><svg class="a" style="left:239px;top:25px" width="30" height="28"><path d="M1.5 6L16 1.5L27.5 11L10 16.5ZM6.3 4.5L15.8 14.7M4.3 9.5L19.8 4.7M11.2 3.0L21.7 12.8M7.2 13.0L23.7 7.8" fill="none" stroke="#c8864a" stroke-width="1.6"/><rect x="0.2" y="4.7" width="2.6" height="2.6" fill="#e8e070" stroke="#333" stroke-width=".4"/><rect x="3.0" y="8.2" width="2.6" height="2.6" fill="#e8e070" stroke="#333" stroke-width=".4"/><rect x="5.9" y="11.7" width="2.6" height="2.6" fill="#e8e070" stroke="#333" stroke-width=".4"/><rect x="8.7" y="15.2" width="2.6" height="2.6" fill="#e8e070" stroke="#333" stroke-width=".4"/><rect x="5.0" y="3.2" width="2.6" height="2.6" fill="#e8e070" stroke="#333" stroke-width=".4"/><rect x="14.5" y="13.4" width="2.6" height="2.6" fill="#e8e070" stroke="#333" stroke-width=".4"/><rect x="9.9" y="1.7" width="2.6" height="2.6" fill="#e8e070" stroke="#333" stroke-width=".4"/><rect x="20.4" y="11.5" width="2.6" height="2.6" fill="#e8e070" stroke="#333" stroke-width=".4"/><rect x="14.7" y="0.2" width="2.6" height="2.6" fill="#e8e070" stroke="#333" stroke-width=".4"/><rect x="18.5" y="3.4" width="2.6" height="2.6" fill="#e8e070" stroke="#333" stroke-width=".4"/><rect x="22.4" y="6.5" width="2.6" height="2.6" fill="#e8e070" stroke="#333" stroke-width=".4"/><rect x="26.2" y="9.7" width="2.6" height="2.6" fill="#e8e070" stroke="#333" stroke-width=".4"/><path d="M17 14H25L24 24H18Z" fill="#6a6a6a" stroke="#2a2a2a" stroke-width=".8"/><ellipse cx="21" cy="14" rx="4.5" ry="1.6" fill="#aaa" stroke="#333" stroke-width=".5"/><path d="M19.5 16V23M21 16V23M22.5 16V23" stroke="#888" stroke-width=".7"/></svg><svg class="a" style="left:268px;top:25px" width="10" height="28"><path d="M1 10L12 5V20L1 24Z" fill="#8a8262"/></svg></div><div class="a" id="tool"><div class="a" style="left:4px;top:7px;width:30px;height:3px;background:repeating-linear-gradient(90deg,#6a6a6a 0 1px,transparent 1px 5px)"></div><div class="a" style="left:35px;top:1px;width:1px;height:617px;background:#353535"></div><div class="a" style="left:4px;top:12.5px;width:29px;height:29px;background:#434343;border:1px solid #2e2e2e;box-shadow:inset 0 0 0 1px #505050;border-radius:2px"></div><div class="a" style="left:4px;top:43.5px;width:29px;height:29px;background:#434343;border:1px solid #2e2e2e;box-shadow:inset 0 0 0 1px #505050;border-radius:2px"></div><div class="a" style="left:4px;top:74.5px;width:29px;height:29px;background:#434343;border:1px solid #2e2e2e;box-shadow:inset 0 0 0 1px #505050;border-radius:2px"></div><div class="a" style="left:4px;top:105.5px;width:29px;height:29px;background:#434343;border:1px solid #2e2e2e;box-shadow:inset 0 0 0 1px #505050;border-radius:2px"></div><div class="a" style="left:4px;top:136.5px;width:29px;height:29px;background:linear-gradient(#c8c8c8,#a8a8a8);border:1px solid #2e2e2e;box-shadow:inset 0 0 0 1px #d8d8d8;border-radius:2px"></div><div class="a" style="left:4px;top:167.5px;width:29px;height:29px;background:#434343;border:1px solid #2e2e2e;box-shadow:inset 0 0 0 1px #505050;border-radius:2px"></div><div class="a" style="left:4px;top:198px;width:29px;height:29px;background:#434343;border:1px solid #2e2e2e;box-shadow:inset 0 0 0 1px #505050;border-radius:2px"></div><div class="a" style="left:4px;top:229px;width:29px;height:29px;background:#434343;border:1px solid #2e2e2e;box-shadow:inset 0 0 0 1px #505050;border-radius:2px"></div><div class="a" style="left:4px;top:259.5px;width:29px;height:29px;background:#434343;border:1px solid #2e2e2e;box-shadow:inset 0 0 0 1px #505050;border-radius:2px"></div><div class="a" style="left:4px;top:290px;width:29px;height:29px;background:#434343;border:1px solid #2e2e2e;box-shadow:inset 0 0 0 1px #505050;border-radius:2px"></div><svg class="a" style="left:4px;top:12.5px" width="30" height="30"><path d="M9 6L22 17L16 17.5L19.5 24L16.5 25.5L13 19L9 23Z" fill="#b82028" stroke="#fff" stroke-width="1.2"/></svg><svg class="a" style="left:4px;top:43.5px" width="30" height="30"><path d="M6 10Q5 4 12 5Q18 5 17 10M6 12Q5 20 10 22" fill="none" stroke="#ccc" stroke-width="1.3" stroke-dasharray="3 2"/><path d="M13 12L24 21L19 21.5L22 27L19.5 28L16.5 23L13 26Z" fill="#b82028" stroke="#fff" stroke-width="1.1"/></svg><svg class="a" style="left:4px;top:74.5px" width="30" height="30"><ellipse cx="12" cy="20" rx="9" ry="5" fill="none" stroke="#b82028" stroke-width="2.2"/><path d="M12 18L24 6" stroke="#8a6040" stroke-width="2.5"/><path d="M9 17L13 21L10 23L7 20Z" fill="#ddd"/><g fill="#eed" stroke="#333" stroke-width=".5"><rect x="5" y="17" width="3" height="3"/><rect x="14" y="22" width="3" height="3"/><rect x="9" y="13" width="3" height="3"/></g></svg><svg class="a" style="left:4px;top:105.5px" width="30" height="30"><path d="M10 4L4 22H14Z" fill="#888"/><path d="M13 6L8 22H17Z" fill="#aaa"/><path d="M19 7L13 23Q19 26 25 23Z" fill="#5aa0d8" stroke="#2a5a80" stroke-width=".6"/><path d="M5 18L19 26" stroke="#b82028" stroke-width="2.5"/><path d="M17 23L23 28L16 28Z" fill="#b82028"/></svg><svg class="a" style="left:4px;top:136.5px" width="30" height="30"><circle cx="15" cy="12" r="8" fill="#4a90d8"/><circle cx="13" cy="9" r="3.5" fill="#b0d8f8"/><path d="M5 17Q3 26 15 26Q25 26 25 18" fill="none" stroke="#b82028" stroke-width="3"/><path d="M21 20L27 16L27 23Z" fill="#b82028"/></svg><svg class="a" style="left:4px;top:167.5px" width="30" height="30"><path d="M10 13L16 10L22 13V20L16 23L10 20Z" fill="#6ab0e8" stroke="#2a6090" stroke-width=".7"/><path d="M5 5L11 11M25 5L19 11M5 25L11 19M25 25L19 19" stroke="#b82028" stroke-width="3"/><path d="M3 3H10L3 10ZM27 3V10L20 3ZM3 27V20L10 27ZM27 27H20L27 20Z" fill="#b82028"/></svg><svg class="a" style="left:4px;top:198px" width="30" height="30"><rect x="6" y="8" width="18" height="17" fill="none" stroke="#ddd" stroke-width="1.2"/><path d="M6 8L10 4H26V20L24 25M24 8L26 4" fill="none" stroke="#ddd"/><circle cx="15" cy="17" r="5" fill="#4a90d8"/><path d="M15 3V12" stroke="#3c3" stroke-width="2"/><path d="M6 22L13 18" stroke="#33c" stroke-width="2"/><path d="M18 18L25 22" stroke="#b82028" stroke-width="2"/><g fill="#eed"><rect x="5" y="7" width="3" height="3"/><rect x="22" y="23" width="3" height="3"/><rect x="5" y="23" width="3" height="3"/><rect x="22" y="7" width="3" height="3"/></g></svg><svg class="a" style="left:4px;top:229px" width="30" height="30"><path d="M4 20L12 15L26 20L17 26Z" fill="#6ab0e8" stroke="#2a6090"/><path d="M9 17L16 11L22 18" fill="#8cc8f0"/><path d="M15 4V14" stroke="#b82028" stroke-width="2"/><path d="M12 6L15 2L18 6Z" fill="#b82028"/></svg><svg class="a" style="left:4px;top:259.5px" width="30" height="30"><path d="M15 6V16" stroke="#3c3" stroke-width="2"/><path d="M12 8L15 3L18 8Z" fill="#3c3"/><path d="M15 16L5 21" stroke="#33c" stroke-width="2"/><path d="M15 16L24 23" stroke="#b82028" stroke-width="2"/><path d="M22 25L27 25L24 20Z" fill="#b82028"/><circle cx="15" cy="16" r="3" fill="#4a90d8"/></svg><div class="a" style="left:4.5px;top:330.5px;width:28px;height:27.5px;background:linear-gradient(#f4f4f4,#d0d0d0);border:1px solid #2e2e2e;border-radius:2px"></div><div class="a" style="left:4.5px;top:363px;width:28px;height:27.5px;background:linear-gradient(#f4f4f4,#d0d0d0);border:1px solid #2e2e2e;border-radius:2px"></div><div class="a" style="left:4.5px;top:394px;width:28px;height:27.5px;background:linear-gradient(#f4f4f4,#d0d0d0);border:1px solid #2e2e2e;border-radius:2px"></div><div class="a" style="left:4.5px;top:426px;width:28px;height:27.5px;background:linear-gradient(#f4f4f4,#d0d0d0);border:1px solid #2e2e2e;border-radius:2px"></div><div class="a" style="left:4.5px;top:457px;width:28px;height:27.5px;background:linear-gradient(#f4f4f4,#d0d0d0);border:1px solid #2e2e2e;border-radius:2px"></div><div class="a" style="left:4.5px;top:489px;width:28px;height:27.5px;background:linear-gradient(#f4f4f4,#d0d0d0);border:1px solid #2e2e2e;border-radius:2px"></div><svg class="a" style="left:4.5px;top:330.5px" width="28" height="28"><path d="M5 11L14 5.6000000000000005L23 11L14 16.4Z M9.5 8.3L18.5 13.7 M9.5 13.7L18.5 8.3" fill="none" stroke="#333" stroke-width="1"/><path d="M6 23V18" stroke="#2a2"/><path d="M6 23L10 25" stroke="#c22"/><path d="M6 23L3 25" stroke="#22c"/></svg><svg class="a" style="left:4.5px;top:363px" width="28" height="28"><path d="M14 1V27M1 14H27" stroke="#444" stroke-width="1.2"/><path d="M7 3V12M2.5 7.5H11.5M7 16V25M2.5 20.5H11.5M21 16V25M16.5 20.5H25.5" stroke="#333" stroke-width="1.2"/><path d="M15 8L20.5 4.7L26.0 8L20.5 11.3Z M17.75 6.35L23.25 9.65 M17.75 9.65L23.25 6.35" fill="none" stroke="#333" stroke-width="1"/></svg><svg class="a" style="left:4.5px;top:394px" width="28" height="28"><rect x="1" y="1" width="11" height="26" fill="#333"/><path d="M3 5H9M3 8H8M3 11H9M3 14H8M3 17H9M3 20H8" stroke="#ccc"/><path d="M14 13L19.5 9.7L25.0 13L19.5 16.3Z M16.75 11.35L22.25 14.65 M16.75 14.65L22.25 11.35" fill="none" stroke="#333" stroke-width="1"/><path d="M18 24V19" stroke="#2a2"/><path d="M18 24L22 26" stroke="#c22"/><path d="M18 24L15 26" stroke="#22c"/></svg><svg class="a" style="left:4.5px;top:426px" width="28" height="28"><path d="M1 14H27" stroke="#555"/><path d="M5 7L13 2.2L21 7L13 11.8Z M9.0 4.6L17.0 9.4 M9.0 9.4L17.0 4.6" fill="none" stroke="#333" stroke-width="1"/><path d="M6 25C10 14 14 14 17 20S24 22 26 16" fill="none" stroke="#335" stroke-width="1"/><path d="M10 15V27" stroke="#c33"/></svg><svg class="a" style="left:4.5px;top:457px" width="28" height="28"><rect x="1" y="1" width="11" height="26" fill="#444"/><g fill="#c33"><circle cx="4" cy="4" r="1.3"/><circle cx="8" cy="4" r="1.3"/></g><g fill="#3a3"><circle cx="4" cy="8" r="1.3"/><circle cx="8" cy="8" r="1.3"/></g><rect x="3" y="16" width="7" height="7" fill="#777"/><path d="M14 13L19.5 9.7L25.0 13L19.5 16.3Z M16.75 11.35L22.25 14.65 M16.75 14.65L22.25 11.35" fill="none" stroke="#333" stroke-width="1"/><path d="M18 24V19" stroke="#2a2"/><path d="M18 24L22 26" stroke="#c22"/><path d="M18 24L15 26" stroke="#22c"/></svg><svg class="a" style="left:4.5px;top:489px" width="28" height="28"><path d="M1 14H27" stroke="#555"/><path d="M2 7L7 4.0L12 7L7 10.0Z M4.5 5.5L9.5 8.5 M4.5 8.5L9.5 5.5" fill="none" stroke="#333" stroke-width="1"/><rect x="15" y="3" width="6" height="3" fill="#cc4" stroke="#333" stroke-width=".6"/><rect x="19" y="8" width="6" height="3" fill="#ddd" stroke="#333" stroke-width=".6"/><path d="M6 25C10 14 14 14 17 20S24 22 26 16" fill="none" stroke="#335"/><path d="M10 15V27" stroke="#c33"/></svg><div class="a" style="left:4.5px;top:520px;width:26px;height:25px;background:#444;border:1px solid #2e2e2e;box-shadow:inset 0 0 0 1px #505050"></div><svg class="a" style="left:14.5px;top:531px" width="6" height="4"><path d="M0 0H6L3 3Z" fill="#aaa"/></svg><div class="a" style="left:6px;top:587px;width:25px;height:26px;background:#3a3a3a;border:1px solid #2a2a2a;border-radius:4px;box-shadow:inset 0 0 0 1px #555"></div><svg class="a" style="left:8px;top:589px" width="22" height="22"><path d="M6 19C3 14 4 6 10 4C14 3 17 6 16 9C19 10 19 14 16 16C14 18 12 16 12 14C10 16 8 18 6 19Z" fill="none" stroke="#ccc" stroke-width="1.2"/><path d="M9 12C10 9 13 8 14 10" fill="none" stroke="#ccc"/></svg></div><div class="a" id="panelmenu"><div class="a" style="left:0px;top:0px;width:1px;height:35px;background:#3a3a3a"></div><div class="t" style="left:7px;top:5px;color:#cfcfcf;">View</div><div class="t" style="left:38px;top:5px;color:#cfcfcf;">Shading</div><div class="t" style="left:82px;top:5px;color:#cfcfcf;">Lighting</div><div class="t" style="left:125px;top:5px;color:#cfcfcf;">Show</div><div class="t" style="left:159px;top:5px;color:#cfcfcf;">Renderer</div><div class="t" style="left:209px;top:5px;color:#cfcfcf;">Panels</div><div class="a" style="left:5px;top:20px;width:3px;height:14px;border-left:1px solid #5c5c5c;border-right:1px solid #303030;border-radius:2px"></div><svg class="a" style="left:12px;top:19px" width="15" height="15"><circle cx="4.5" cy="5" r="3.4" fill="#bbb" stroke="#111" stroke-width="1.1"/><circle cx="10" cy="4.5" r="3.4" fill="#bbb" stroke="#111" stroke-width="1.1"/><path d="M4 10.5Q8 8.5 13 10L12.5 13.5Q8 14.5 5 13Z" fill="#0a0a0a"/></svg><svg class="a" style="left:28px;top:20px" width="14" height="14"><circle cx="4" cy="4.5" r="3.3" fill="#ddd" stroke="#333"/><path d="M2 10L8 9L8 13L3 13Z" fill="#111"/><rect x="7.5" y="5" width="6" height="8.5" fill="#eee" stroke="#555" stroke-width=".6"/></svg><svg class="a" style="left:44px;top:20px" width="14" height="14"><rect x="1" y="1.5" width="12" height="11" fill="#f2f2f2" stroke="#777"/><rect x="9" y="1" width="3" height="10" fill="#2a9a2a"/><rect x="3" y="3.5" width="4" height="7" fill="none" stroke="#999"/></svg><svg class="a" style="left:61px;top:20px" width="14" height="14"><path d="M1 10L8 13L13 6L6 3Z" fill="#2a9a2a" stroke="#ccc"/><path d="M3 8L7 11L11 5" fill="none" stroke="#ddd"/></svg><svg class="a" style="left:79px;top:20px" width="14" height="14"><circle cx="9" cy="5" r="3.5" fill="#fff" stroke="#b22" stroke-width="1.2"/><path d="M1 13L7 7M2 4L6 8M4 2V6" stroke="#b22" stroke-width="1.4"/></svg><div class="a" style="left:95px;top:20px;width:3px;height:14px;border-left:1px solid #5c5c5c;border-right:1px solid #303030;border-radius:2px"></div><div class="a" style="left:103.5px;top:19.5px;width:15px;height:15px;background:#6a6a6a;border:1px solid #333;border-radius:2px"></div><div class="a" style="left:153.5px;top:19.5px;width:15px;height:15px;background:#6a6a6a;border:1px solid #333;border-radius:2px"></div><svg class="a" style="left:104px;top:20px" width="14" height="14"><path d="M1 7L7 3L13 7L7 11Z" fill="#8ab0d0" stroke="#ddd"/><path d="M4 5L10 9M10 5L4 9" stroke="#ddd" stroke-width=".6"/></svg><svg class="a" style="left:121px;top:20px" width="14" height="14"><rect x="0.5" y="2" width="13" height="10" fill="#eee" stroke="#555"/><path d="M0.5 5H13.5M0.5 9H13.5M3 2V12M6 2V12M9 2V12" stroke="#444" stroke-width=".7"/></svg><svg class="a" style="left:137px;top:20px" width="14" height="14"><rect x="0.5" y="0.5" width="13" height="13" fill="#eee" stroke="#777"/><circle cx="7" cy="7" r="5" fill="#2a78c8"/><circle cx="5.5" cy="5.5" r="2" fill="#9cf"/></svg><svg class="a" style="left:154px;top:20px" width="14" height="14"><circle cx="7" cy="7" r="5" fill="#bbb" stroke="#fff" stroke-width="1.2"/></svg><svg class="a" style="left:171px;top:20px" width="14" height="14"><rect x="0.5" y="0.5" width="13" height="13" fill="#eee" stroke="#777"/><path d="M1 1L13 13M13 1L1 13M7 1V13M1 7H13" stroke="#333" stroke-width=".9"/></svg><svg class="a" style="left:187px;top:20px" width="14" height="14"><rect x="0.5" y="0.5" width="13" height="13" fill="#eee" stroke="#2a7a2a"/><circle cx="4" cy="5" r="2" fill="#38a"/><circle cx="9" cy="4" r="1.6" fill="#38a"/><circle cx="7" cy="9" r="1.8" fill="#38a"/></svg><svg class="a" style="left:204px;top:20px" width="14" height="14"><rect x="0.5" y="0.5" width="13" height="13" fill="#eee" stroke="#2a7a2a"/><text x="7" y="12" font-size="12" text-anchor="middle" font-family="Liberation Serif" font-weight="bold" fill="#222">T</text></svg><div class="a" style="left:222px;top:20px;width:3px;height:14px;border-left:1px solid #5c5c5c;border-right:1px solid #303030;border-radius:2px"></div><svg class="a" style="left:230px;top:20px" width="10" height="14"><path d="M1 4L6 1L10 3V12L5 13.5L1 11Z" fill="none" stroke="#ccc"/></svg><div class="a" style="left:0px;top:34px;width:1562px;height:1px;background:#3a3a3a"></div></div><div class="a" id="vp"></div><svg class="a" style="left:0;top:0" width="1600" height="863"><defs><clipPath id="vpc"><rect x="39" y="156" width="1559" height="582"/></clipPath><clipPath id="low"><path d="M0 528 L903 527 L1400 531 L1400 700 L0 700Z"/></clipPath></defs><g clip-path="url(#vpc)"><path d="M489.0 502.0 L1275.0 506.5" stroke="#8a8a8a" stroke-width="1" shape-rendering="crispEdges"/><path d="M469.2 503.6 L1277.2 509.1" stroke="#8a8a8a" stroke-width="1" shape-rendering="crispEdges"/><path d="M448.9 505.3 L1279.4 511.7" stroke="#8a8a8a" stroke-width="1" shape-rendering="crispEdges"/><path d="M428.2 507.0 L1281.7 514.3" stroke="#8a8a8a" stroke-width="1" shape-rendering="crispEdges"/><path d="M407.1 508.7 L1284.0 517.0" stroke="#8a8a8a" stroke-width="1" shape-rendering="crispEdges"/><path d="M385.4 510.5 L1286.4 519.8" stroke="#8a8a8a" stroke-width="1" shape-rendering="crispEdges"/><path d="M363.3 512.3 L1288.8 522.7" stroke="#8a8a8a" stroke-width="1" shape-rendering="crispEdges"/><path d="M340.7 514.1 L1291.3 525.6" stroke="#8a8a8a" stroke-width="1" shape-rendering="crispEdges"/><path d="M317.7 516.0 L1293.9 528.5" stroke="#8a8a8a" stroke-width="1" shape-rendering="crispEdges"/><path d="M294.1 517.9 L1296.5 531.6" stroke="#8a8a8a" stroke-width="1" shape-rendering="crispEdges"/><path d="M269.9 519.9 L1299.1 534.7" stroke="#8a8a8a" stroke-width="1" shape-rendering="crispEdges"/><path d="M245.3 521.9 L1301.8 537.8" stroke="#8a8a8a" stroke-width="1" shape-rendering="crispEdges"/><path d="M220.1 524.0 L1304.6 541.1" stroke="#8a8a8a" stroke-width="1" shape-rendering="crispEdges"/><path d="M194.4 526.1 L1307.4 544.4" stroke="#8a8a8a" stroke-width="1" shape-rendering="crispEdges"/><path d="M168.1 528.2 L1310.3 547.8" stroke="#8a8a8a" stroke-width="1" shape-rendering="crispEdges"/><path d="M141.2 530.4 L1313.3 551.2" stroke="#8a8a8a" stroke-width="1" shape-rendering="crispEdges"/><path d="M113.7 532.7 L1316.3 554.8" stroke="#8a8a8a" stroke-width="1" shape-rendering="crispEdges"/><path d="M85.6 535.0 L1319.4 558.4" stroke="#8a8a8a" stroke-width="1" shape-rendering="crispEdges"/><path d="M56.9 537.3 L1322.5 562.1" stroke="#8a8a8a" stroke-width="1" shape-rendering="crispEdges"/><path d="M27.6 539.7 L1325.8 565.9" stroke="#8a8a8a" stroke-width="1" shape-rendering="crispEdges"/><path d="M-2.4 542.2 L1329.1 569.7" stroke="#8a8a8a" stroke-width="1" shape-rendering="crispEdges"/><path d="M-33.0 544.7 L1332.4 573.7" stroke="#8a8a8a" stroke-width="1" shape-rendering="crispEdges"/><path d="M-64.3 547.2 L1335.9 577.7" stroke="#8a8a8a" stroke-width="1" shape-rendering="crispEdges"/><path d="M-96.3 549.8 L1339.4 581.8" stroke="#8a8a8a" stroke-width="1" shape-rendering="crispEdges"/><path d="M-129.0 552.5 L1343.0 586.0" stroke="#8a8a8a" stroke-width="1" shape-rendering="crispEdges"/><path d="M1343.0 586.0 L1275.5 506.5" stroke="#8a8a8a" stroke-width="1"/><path d="M1266.0 584.2 L1239.0 506.3" stroke="#8a8a8a" stroke-width="1"/><path d="M1190.5 582.5 L1202.6 506.1" stroke="#8a8a8a" stroke-width="1"/><path d="M1116.5 580.8 L1166.3 505.9" stroke="#8a8a8a" stroke-width="1"/><path d="M1044.0 579.2 L1130.1 505.7" stroke="#8a8a8a" stroke-width="1"/><path d="M973.0 577.6 L1094.0 505.5" stroke="#8a8a8a" stroke-width="1"/><path d="M903.5 576.0 L1058.2 505.3" stroke="#8a8a8a" stroke-width="1"/><path d="M835.5 574.5 L1022.5 505.1" stroke="#8a8a8a" stroke-width="1"/><path d="M769.0 572.9 L987.1 504.9" stroke="#8a8a8a" stroke-width="1"/><path d="M704.0 571.5 L951.9 504.7" stroke="#8a8a8a" stroke-width="1"/><path d="M640.5 570.0 L916.9 504.5" stroke="#8a8a8a" stroke-width="1"/><path d="M578.5 568.6 L882.3 504.3" stroke="#8a8a8a" stroke-width="1"/><path d="M518.0 567.2 L848.0 504.1" stroke="#8a8a8a" stroke-width="1"/><path d="M459.0 565.9 L814.1 503.9" stroke="#8a8a8a" stroke-width="1"/><path d="M401.5 564.6 L780.5 503.7" stroke="#8a8a8a" stroke-width="1"/><path d="M345.5 563.3 L747.3 503.5" stroke="#8a8a8a" stroke-width="1"/><path d="M291.0 562.1 L714.6 503.3" stroke="#8a8a8a" stroke-width="1"/><path d="M238.0 560.9 L682.3 503.1" stroke="#8a8a8a" stroke-width="1"/><path d="M186.5 559.7 L650.5 502.9" stroke="#8a8a8a" stroke-width="1"/><path d="M136.5 558.5 L619.2 502.7" stroke="#8a8a8a" stroke-width="1"/><path d="M88.0 557.4 L588.5 502.6" stroke="#8a8a8a" stroke-width="1"/><path d="M41.0 556.4 L558.4 502.4" stroke="#8a8a8a" stroke-width="1"/><path d="M-4.5 555.3 L528.8 502.2" stroke="#8a8a8a" stroke-width="1"/><path d="M-48.5 554.3 L499.9 502.1" stroke="#8a8a8a" stroke-width="1"/><path d="M-91.0 553.4 L471.7 501.9" stroke="#8a8a8a" stroke-width="1"/><path d="M-129 552.5 L489 502.0" stroke="#8a8a8a" stroke-width="1"/><path d="M719.5 626.3 L758.4 576.7 L807 518.3 L850.8 462.4 L894.6 408.9 L933.5 362.7 L972.4 311.6 L996.7 287.3 L1024.4 370.5 L982.1 421 L948 469.7 L914 513.5 L870.2 571.8 L826.5 630.2 L782.7 682.7 Z" fill="#737373"/><g clip-path="url(#low)"><path d="M489.0 502.0 L1275.0 506.5" stroke="#8a8a8a" stroke-width="1" shape-rendering="crispEdges"/><path d="M469.2 503.6 L1277.2 509.1" stroke="#8a8a8a" stroke-width="1" shape-rendering="crispEdges"/><path d="M448.9 505.3 L1279.4 511.7" stroke="#8a8a8a" stroke-width="1" shape-rendering="crispEdges"/><path d="M428.2 507.0 L1281.7 514.3" stroke="#8a8a8a" stroke-width="1" shape-rendering="crispEdges"/><path d="M407.1 508.7 L1284.0 517.0" stroke="#8a8a8a" stroke-width="1" shape-rendering="crispEdges"/><path d="M385.4 510.5 L1286.4 519.8" stroke="#8a8a8a" stroke-width="1" shape-rendering="crispEdges"/><path d="M363.3 512.3 L1288.8 522.7" stroke="#8a8a8a" stroke-width="1" shape-rendering="crispEdges"/><path d="M340.7 514.1 L1291.3 525.6" stroke="#8a8a8a" stroke-width="1" shape-rendering="crispEdges"/><path d="M317.7 516.0 L1293.9 528.5" stroke="#8a8a8a" stroke-width="1" shape-rendering="crispEdges"/><path d="M294.1 517.9 L1296.5 531.6" stroke="#8a8a8a" stroke-width="1" shape-rendering="crispEdges"/><path d="M269.9 519.9 L1299.1 534.7" stroke="#8a8a8a" stroke-width="1" shape-rendering="crispEdges"/><path d="M245.3 521.9 L1301.8 537.8" stroke="#8a8a8a" stroke-width="1" shape-rendering="crispEdges"/><path d="M220.1 524.0 L1304.6 541.1" stroke="#8a8a8a" stroke-width="1" shape-rendering="crispEdges"/><path d="M194.4 526.1 L1307.4 544.4" stroke="#8a8a8a" stroke-width="1" shape-rendering="crispEdges"/><path d="M168.1 528.2 L1310.3 547.8" stroke="#8a8a8a" stroke-width="1" shape-rendering="crispEdges"/><path d="M141.2 530.4 L1313.3 551.2" stroke="#8a8a8a" stroke-width="1" shape-rendering="crispEdges"/><path d="M113.7 532.7 L1316.3 554.8" stroke="#8a8a8a" stroke-width="1" shape-rendering="crispEdges"/><path d="M85.6 535.0 L1319.4 558.4" stroke="#8a8a8a" stroke-width="1" shape-rendering="crispEdges"/><path d="M56.9 537.3 L1322.5 562.1" stroke="#8a8a8a" stroke-width="1" shape-rendering="crispEdges"/><path d="M27.6 539.7 L1325.8 565.9" stroke="#8a8a8a" stroke-width="1" shape-rendering="crispEdges"/><path d="M-2.4 542.2 L1329.1 569.7" stroke="#8a8a8a" stroke-width="1" shape-rendering="crispEdges"/><path d="M-33.0 544.7 L1332.4 573.7" stroke="#8a8a8a" stroke-width="1" shape-rendering="crispEdges"/><path d="M-64.3 547.2 L1335.9 577.7" stroke="#8a8a8a" stroke-width="1" shape-rendering="crispEdges"/><path d="M-96.3 549.8 L1339.4 581.8" stroke="#8a8a8a" stroke-width="1" shape-rendering="crispEdges"/><path d="M-129.0 552.5 L1343.0 586.0" stroke="#8a8a8a" stroke-width="1" shape-rendering="crispEdges"/><path d="M1343.0 586.0 L1275.5 506.5" stroke="#8a8a8a" stroke-width="1"/><path d="M1266.0 584.2 L1239.0 506.3" stroke="#8a8a8a" stroke-width="1"/><path d="M1190.5 582.5 L1202.6 506.1" stroke="#8a8a8a" stroke-width="1"/><path d="M1116.5 580.8 L1166.3 505.9" stroke="#8a8a8a" stroke-width="1"/><path d="M1044.0 579.2 L1130.1 505.7" stroke="#8a8a8a" stroke-width="1"/><path d="M973.0 577.6 L1094.0 505.5" stroke="#8a8a8a" stroke-width="1"/><path d="M903.5 576.0 L1058.2 505.3" stroke="#8a8a8a" stroke-width="1"/><path d="M835.5 574.5 L1022.5 505.1" stroke="#8a8a8a" stroke-width="1"/><path d="M769.0 572.9 L987.1 504.9" stroke="#8a8a8a" stroke-width="1"/><path d="M704.0 571.5 L951.9 504.7" stroke="#8a8a8a" stroke-width="1"/><path d="M640.5 570.0 L916.9 504.5" stroke="#8a8a8a" stroke-width="1"/><path d="M578.5 568.6 L882.3 504.3" stroke="#8a8a8a" stroke-width="1"/><path d="M518.0 567.2 L848.0 504.1" stroke="#8a8a8a" stroke-width="1"/><path d="M459.0 565.9 L814.1 503.9" stroke="#8a8a8a" stroke-width="1"/><path d="M401.5 564.6 L780.5 503.7" stroke="#8a8a8a" stroke-width="1"/><path d="M345.5 563.3 L747.3 503.5" stroke="#8a8a8a" stroke-width="1"/><path d="M291.0 562.1 L714.6 503.3" stroke="#8a8a8a" stroke-width="1"/><path d="M238.0 560.9 L682.3 503.1" stroke="#8a8a8a" stroke-width="1"/><path d="M186.5 559.7 L650.5 502.9" stroke="#8a8a8a" stroke-width="1"/><path d="M136.5 558.5 L619.2 502.7" stroke="#8a8a8a" stroke-width="1"/><path d="M88.0 557.4 L588.5 502.6" stroke="#8a8a8a" stroke-width="1"/><path d="M41.0 556.4 L558.4 502.4" stroke="#8a8a8a" stroke-width="1"/><path d="M-4.5 555.3 L528.8 502.2" stroke="#8a8a8a" stroke-width="1"/><path d="M-48.5 554.3 L499.9 502.1" stroke="#8a8a8a" stroke-width="1"/><path d="M-91.0 553.4 L471.7 501.9" stroke="#8a8a8a" stroke-width="1"/><path d="M-129 552.5 L489 502.0" stroke="#8a8a8a" stroke-width="1"/></g><path d="M600 522.3 L903 527.3 L1060 529.3 L1296 533" stroke="#111" stroke-width="2" fill="none"/><path d="M510 569.5 L807 514" stroke="#111" stroke-width="2" fill="none"/><circle cx="1012" cy="328.5" r="87" fill="none" stroke="#78d0e8" stroke-width="1.2"/><circle cx="1012.2" cy="329.5" r="76" fill="none" stroke="#7a7a7a" stroke-width="1"/><path d="M1050.20 263.68 A76 76 0 1 1 969.70 392.51" fill="none" stroke="#e8e050" stroke-width="1.3"/><path d="M1050.20 263.68 Q988 314 969.70 392.51" fill="none" stroke="#d02828" stroke-width="1.3"/><path d="M947 290.7 L1075 368.6" stroke="#50e050" stroke-width="1.6"/><path d="M1038.6 291.4 L986.5 366.7 M1042 294 L990 368 M977 301.8 L1007 325" stroke="#70e0a0" stroke-width=".9" fill="none"/><circle cx="988.8" cy="335.4" r="2.5" fill="none" stroke="#70e0a0"/><circle cx="1010.8" cy="328.5" r="3" fill="none" stroke="#50e080" stroke-width="1.3"/><circle cx="954" cy="389.4" r="2.5" fill="#c040c0"/><path d="M876 450.5 V541.5 M876 495 H921.5 M851.7 527.7 L906 461" stroke="#c030d0" stroke-width="1.3"/><path d="M846 469 L911 523.6" stroke="#c030d0" stroke-width="1" stroke-dasharray="3 3"/><circle cx="876" cy="495" r="4" fill="#c030d0"/><circle cx="876" cy="495" r="6" fill="none" stroke="#c030d0" stroke-width=".8"/><path d="M1000.5 515.5 V552 M982 533 H1019" stroke="#c030d0" stroke-width="1.3"/><circle cx="800" cy="593.5" r="2.5" fill="none" stroke="#c030d0" stroke-width="1.2"/><path d="M750.6 611.5 V697.5 M709.4 654.3 H750 M760 654.3 H775 M780 655 H791" stroke="#1e5a2a" stroke-width="1.2"/><path d="M725 687 L775.6 624.5 M719.3 626.1 L783.4 682.9" stroke="#c030d0" stroke-width="1"/><circle cx="750.6" cy="654.3" r="3" fill="none" stroke="#c030d0" stroke-width="1.3"/><circle cx="763.6" cy="638.6" r="2.5" fill="none" stroke="#c030d0" stroke-width="1.1"/><path d="M877.3 642.8 V676.7 M860.6 658.4 H895.5" stroke="#1e5a2a" stroke-width="1.2"/><path d="M1112.4 391.6 L1145.3 411.3 M1138.3 385.5 L1117.5 417.4" stroke="#78e0b0" stroke-width="1"/><path d="M60 702.5 V716 H70" stroke="#30c030" stroke-width="1.2" fill="none"/><path d="M61 716 H70" stroke="#e03030" stroke-width="1.2"/></g></svg><div class="t" style="left:56.5px;top:692px;color:#30c030;font-size:8px;letter-spacing:0px;font-weight:bold">y</div><div class="t" style="left:53px;top:706px;color:#3030e0;font-size:8px;letter-spacing:0px;font-weight:bold">z</div><div class="t" style="left:69px;top:706px;color:#e03030;font-size:8px;letter-spacing:0px;font-weight:bold">x</div><div class="t" style="left:801px;top:721.5px;color:#1a5a24;font-size:10px;letter-spacing:0.1px;font-weight:bold">persp</div><div class="a" id="timeline"><div class="a" style="left:0px;top:0px;width:1600px;height:2px;background:#444"></div><div class="a" style="left:0px;top:2px;width:1600px;height:2.5px;background:#2e2e2e"></div><div class="a" style="left:4px;top:7px;width:4px;height:44px;background:radial-gradient(circle at 1px 1px,#6e6e6e 0.9px,transparent 1.2px) 0 0/3px 3px"></div><div class="a" style="left:12px;top:3.5px;width:1337px;height:48.5px;background:linear-gradient(90deg,#8a8a8a,#888 50%,#8a8a8a);border-top:1px solid #2a2a2a"></div><div class="a" style="left:17.6px;top:16px;width:1.6px;height:35px;background:#111"></div><div class="t" style="left:29.6px;top:3.5px;color:#151515;font-size:9.5px;letter-spacing:-0.2px;">1</div><div class="a" style="left:72.80000000000001px;top:16px;width:1.6px;height:35px;background:#111"></div><div class="t" style="left:84.80000000000001px;top:3.5px;color:#151515;font-size:9.5px;letter-spacing:-0.2px;">2</div><div class="a" style="left:128.0px;top:16px;width:1.6px;height:35px;background:#111"></div><div class="t" style="left:140.0px;top:3.5px;color:#151515;font-size:9.5px;letter-spacing:-0.2px;">3</div><div class="a" style="left:183.20000000000002px;top:16px;width:1.6px;height:35px;background:#111"></div><div class="t" style="left:195.20000000000002px;top:3.5px;color:#151515;font-size:9.5px;letter-spacing:-0.2px;">4</div><div class="a" style="left:238.4px;top:16px;width:1.6px;height:35px;background:#111"></div><div class="t" style="left:250.4px;top:3.5px;color:#151515;font-size:9.5px;letter-spacing:-0.2px;">5</div><div class="a" style="left:293.6px;top:16px;width:1.6px;height:35px;background:#111"></div><div class="t" style="left:305.6px;top:3.5px;color:#151515;font-size:9.5px;letter-spacing:-0.2px;">6</div><div class="a" style="left:348.80000000000007px;top:16px;width:1.6px;height:35px;background:#111"></div><div class="t" style="left:360.80000000000007px;top:3.5px;color:#151515;font-size:9.5px;letter-spacing:-0.2px;">7</div><div class="a" style="left:404.00000000000006px;top:16px;width:1.6px;height:35px;background:#111"></div><div class="t" style="left:416.00000000000006px;top:3.5px;color:#151515;font-size:9.5px;letter-spacing:-0.2px;">8</div><div class="a" style="left:459.20000000000005px;top:16px;width:1.6px;height:35px;background:#111"></div><div class="t" style="left:471.20000000000005px;top:3.5px;color:#151515;font-size:9.5px;letter-spacing:-0.2px;">9</div><div class="a" style="left:514.4px;top:16px;width:1.6px;height:35px;background:#111"></div><div class="t" style="left:526.4px;top:3.5px;color:#151515;font-size:9.5px;letter-spacing:-0.2px;">10</div><div class="a" style="left:569.6px;top:16px;width:1.6px;height:35px;background:#111"></div><div class="t" style="left:581.6px;top:3.5px;color:#151515;font-size:9.5px;letter-spacing:-0.2px;">11</div><div class="a" style="left:624.8000000000001px;top:16px;width:1.6px;height:35px;background:#111"></div><div class="t" style="left:636.8000000000001px;top:3.5px;color:#151515;font-size:9.5px;letter-spacing:-0.2px;">12</div><div class="a" style="left:680.0000000000001px;top:16px;width:1.6px;height:35px;background:#111"></div><div class="t" style="left:692.0000000000001px;top:3.5px;color:#151515;font-size:9.5px;letter-spacing:-0.2px;">13</div><div class="a" style="left:735.2px;top:16px;width:1.6px;height:35px;background:#111"></div><div class="t" style="left:747.2px;top:3.5px;color:#151515;font-size:9.5px;letter-spacing:-0.2px;">14</div><div class="a" style="left:790.4000000000001px;top:16px;width:1.6px;height:35px;background:#111"></div><div class="t" style="left:802.4000000000001px;top:3.5px;color:#151515;font-size:9.5px;letter-spacing:-0.2px;">15</div><div class="a" style="left:845.6px;top:16px;width:1.6px;height:35px;background:#111"></div><div class="t" style="left:857.6px;top:3.5px;color:#151515;font-size:9.5px;letter-spacing:-0.2px;">16</div><div class="a" style="left:900.8000000000001px;top:16px;width:1.6px;height:35px;background:#111"></div><div class="t" style="left:912.8000000000001px;top:3.5px;color:#151515;font-size:9.5px;letter-spacing:-0.2px;">17</div><div class="a" style="left:956.0000000000001px;top:16px;width:1.6px;height:35px;background:#111"></div><div class="t" style="left:968.0000000000001px;top:3.5px;color:#151515;font-size:9.5px;letter-spacing:-0.2px;">18</div><div class="a" style="left:1011.2px;top:16px;width:1.6px;height:35px;background:#111"></div><div class="t" style="left:1023.2px;top:3.5px;color:#151515;font-size:9.5px;letter-spacing:-0.2px;">19</div><div class="a" style="left:1066.3999999999999px;top:16px;width:1.6px;height:35px;background:#111"></div><div class="t" style="left:1078.3999999999999px;top:3.5px;color:#151515;font-size:9.5px;letter-spacing:-0.2px;">20</div><div class="a" style="left:1121.6px;top:16px;width:1.6px;height:35px;background:#111"></div><div class="t" style="left:1133.6px;top:3.5px;color:#151515;font-size:9.5px;letter-spacing:-0.2px;">21</div><div class="a" style="left:1176.8px;top:16px;width:1.6px;height:35px;background:#111"></div><div class="t" style="left:1188.8px;top:3.5px;color:#151515;font-size:9.5px;letter-spacing:-0.2px;">22</div><div class="a" style="left:1232.0px;top:16px;width:1.6px;height:35px;background:#111"></div><div class="t" style="left:1244.0px;top:3.5px;color:#151515;font-size:9.5px;letter-spacing:-0.2px;">23</div><div class="a" style="left:1287.2px;top:16px;width:1.6px;height:35px;background:#111"></div><div class="t" style="left:1299.2px;top:3.5px;color:#151515;font-size:9.5px;letter-spacing:-0.2px;">24</div><div class="a" style="left:0px;top:52px;width:1600px;height:3px;background:#353535"></div><div class="a" style="left:1352px;top:9px;width:56px;height:15px;background:#2b2b2b;border-radius:1px"></div><div class="t" style="left:1355px;top:10.5px;color:#e0e0e0;font-size:10px;letter-spacing:-0.3px;">14.00</div><svg class="a" style="left:1415px;top:11px" width="17" height="16"><path d="M1 2V13" stroke="#ddd" stroke-width="2"/><path d="M9 2L3 7.5L9 13ZM15 2L9 7.5L15 13Z" fill="#ddd"/></svg><svg class="a" style="left:1438px;top:11px" width="17" height="16"><path d="M2 2V13" stroke="#ddd" stroke-width="2"/><path d="M13 2L4 7.5L13 13Z" fill="#ddd"/></svg><svg class="a" style="left:1461px;top:11px" width="17" height="16"><path d="M2 1V14" stroke="#c03040" stroke-width="2.2"/><path d="M14 2L5 7.5L14 13Z" fill="#ddd"/></svg><svg class="a" style="left:1486px;top:11px" width="17" height="16"><path d="M12 2L3 7.5L12 13Z" fill="#ddd"/></svg><svg class="a" style="left:1509px;top:11px" width="17" height="16"><path d="M3 2L12 7.5L3 13Z" fill="#ddd"/></svg><svg class="a" style="left:1531px;top:11px" width="17" height="16"><path d="M2 2L11 7.5L2 13Z" fill="#ddd"/><path d="M13 1V14" stroke="#c03040" stroke-width="2.2"/></svg><svg class="a" style="left:1554px;top:11px" width="17" height="16"><path d="M2 2L11 7.5L2 13Z" fill="#ddd"/><path d="M13 2V13" stroke="#ddd" stroke-width="2"/></svg><svg class="a" style="left:1577px;top:11px" width="17" height="16"><path d="M1 2L7 7.5L1 13ZM7 2L13 7.5L7 13Z" fill="#ddd"/><path d="M15 2V13" stroke="#ddd" stroke-width="2"/></svg><div class="a" style="left:12px;top:58.5px;width:55.5px;height:17px;background:#2e2e2e;border-radius:1px"></div><div class="t" style="left:15px;top:62.5px;color:#dcdcdc;font-size:10px;letter-spacing:-0.3px;">1.00</div><div class="a" style="left:71.5px;top:58.5px;width:56px;height:17px;background:#2e2e2e;border-radius:1px"></div><div class="t" style="left:75px;top:62.5px;color:#dcdcdc;font-size:10px;letter-spacing:-0.3px;">1.00</div><div class="a" style="left:131px;top:58.5px;width:1105px;height:17px;background:#2b2b2b"></div><div class="a" style="left:137.5px;top:59.5px;width:546.5px;height:15px;background:linear-gradient(#8a8a8a,#7e7e7e);border:1px solid #5a5a5a"></div><div class="a" style="left:143px;top:63px;width:7px;height:8px;border-left:1px solid #333;border-bottom:1px solid #333"></div><div class="t" style="left:154px;top:61.5px;color:#e8e8e8;font-size:10px;letter-spacing:0px;">1</div><div class="t" style="left:656px;top:61.5px;color:#e8e8e8;font-size:10px;letter-spacing:0px;">24</div><div class="a" style="left:671px;top:63px;width:7px;height:8px;border-right:1px solid #333;border-bottom:1px solid #333"></div><div class="a" style="left:1239px;top:58.5px;width:56px;height:17px;background:#2e2e2e;border-radius:1px"></div><div class="t" style="left:1242px;top:62.5px;color:#dcdcdc;font-size:10px;letter-spacing:-0.3px;">24.00</div><div class="a" style="left:1299px;top:58.5px;width:56px;height:17px;background:#2e2e2e;border-radius:1px"></div><div class="t" style="left:1302px;top:62.5px;color:#dcdcdc;font-size:10px;letter-spacing:-0.3px;">48.00</div><svg class="a" style="left:1359.5px;top:63px" width="9" height="6"><path d="M0.5 0.5H8.5L4.5 5Z" fill="none" stroke="#999"/></svg><div class="a" style="left:1375px;top:58.5px;width:82px;height:19px;border:1px solid #3c3c3c;border-radius:2px;background:#464646"></div><div class="t" style="left:1377.5px;top:61.5px;color:#d0d0d0;font-size:10px;letter-spacing:-0.67px;">No Anim Layer</div><svg class="a" style="left:1462px;top:63px" width="9" height="6"><path d="M0.5 0.5H8.5L4.5 5Z" fill="none" stroke="#999"/></svg><div class="a" style="left:1477px;top:58.5px;width:83px;height:19px;border:1px solid #3c3c3c;border-radius:2px;background:#464646"></div><div class="t" style="left:1480px;top:61.5px;color:#d0d0d0;font-size:10px;letter-spacing:-0.5px;">No Character Set</div><svg class="a" style="left:1565px;top:65px" width="14" height="8"><circle cx="3" cy="3.5" r="2.3" fill="none" stroke="#ccc" stroke-width="1.2"/><path d="M5.5 3.5H13M10 3.5V6M12 3.5V6" stroke="#ccc" stroke-width="1.2"/></svg><svg class="a" style="left:1582px;top:62px" width="13" height="14"><rect x="0.5" y="0.5" width="12" height="13" fill="#f4f0f0" stroke="#aab"/><rect x="0.5" y="0.5" width="12" height="3" fill="#6a8ab0"/><path d="M3 6L10 12M10 6L3 12M6.5 5V12" stroke="#d03030" stroke-width="1"/></svg><div class="a" style="left:0px;top:78.5px;width:1600px;height:1px;background:#3a3a3a"></div><div class="a" style="left:4px;top:81px;width:4px;height:22px;background:radial-gradient(circle at 1px 1px,#6e6e6e 0.9px,transparent 1.2px) 0 0/3px 3px"></div><div class="t" style="left:20px;top:86px;color:#d8d8d8;font-size:9.5px;letter-spacing:-0.5px;">MEL</div><div class="a" style="left:49.5px;top:82px;width:746px;height:20px;background:#2b2b2b;border-radius:2px"></div><div class="a" style="left:802px;top:82px;width:780px;height:20px;background:#000;border-radius:1px"></div><svg class="a" style="left:1582px;top:85px" width="13" height="14"><rect x="0.5" y="0.5" width="12" height="13" fill="#e0e0e0" stroke="#556"/><rect x="0.5" y="0.5" width="12" height="3" fill="#5a8ac0"/><path d="M2 7H11M2 10H11" stroke="#555"/></svg><div class="a" style="left:0px;top:104px;width:1600px;height:1px;background:#3a3a3a"></div><div class="a" style="left:4px;top:107px;width:4px;height:18px;background:radial-gradient(circle at 1px 1px,#6e6e6e 0.9px,transparent 1.2px) 0 0/3px 3px"></div><div class="a" style="left:11px;top:107px;width:1587px;height:20px;border-top:1px solid #363636;border-left:1px solid #363636;background:#474747"></div><svg class="a" style="left:1586px;top:111px" width="12" height="12"><path d="M11 2L2 11M11 6L6 11M11 10L10 11" stroke="#777" stroke-width="1.2"/></svg></div><div class="a" style="left:277px;top:79px;width:368px;height:703px;border-radius:7px;box-shadow:3px 3px 9px 2px rgba(0,0,0,.6)"></div><div class="a" style="left:277px;top:79px;width:368px;height:703px;border-radius:7px;border:1px solid #1e3a3a;background:linear-gradient(90deg,#94c8c8 0%,#b4dcdc 8%,#9ccccc 30%,#72b2b0 50%,#84c0be 70%,#a4d4d4 100%);box-shadow:inset 0 0 0 1px rgba(255,255,255,.55)"></div><div class="a" style="left:278px;top:80px;width:366px;height:23px;border-radius:6px 6px 0 0;background:linear-gradient(180deg,rgba(255,255,255,.12),rgba(255,255,255,0) 40%,rgba(255,255,255,0) 75%,rgba(200,240,240,.3)),linear-gradient(90deg,#b0d8d8 0%,#8cc4c4 12%,#6aacaa 30%,#5a9e9c 50%,#68aaa8 70%,#5ca09e 90%,#8cc4c4 100%)"></div><div class="a" style="left:287px;top:86.5px;width:10px;height:12px;background:linear-gradient(#5a6a70,#141c20);border:1px solid #9ab"></div><svg class="a" style="left:288px;top:88px" width="8" height="9"><path d="M2 8C1 5 2 2 4 1C6 2 7 4 5 6C4 5 3 6 3 8" fill="none" stroke="#ddd" stroke-width=".9"/></svg><div class="t" style="left:302px;top:84px;color:#142222;font-size:11px;letter-spacing:-0.2px;">Outliner</div><div class="a" style="left:555px;top:79px;width:45px;height:15.5px;border:1px solid #2c5656;border-top:none;border-radius:0 0 0 4px;background:linear-gradient(#b8dcdc,#84b8b8 50%,#5e9e9e 52%,#78b4b4);box-shadow:inset 0 0 0 1px rgba(255,255,255,.45)"></div><div class="a" style="left:577.5px;top:79px;width:1px;height:15px;background:#3c6a6a"></div><div class="a" style="left:563px;top:85.5px;width:10px;height:3px;background:#fff;border:1px solid #345"></div><div class="a" style="left:585px;top:83px;width:9px;height:7.5px;border:1.5px solid #fff;outline:1px solid #456;border-top-width:2.5px"></div><div class="a" style="left:600px;top:79px;width:40px;height:15.5px;border:1px solid #5a1a10;border-top:none;border-radius:0 0 4px 0;background:linear-gradient(#e8a898,#d86a50 45%,#c83a1a 55%,#d86040);box-shadow:inset 0 0 0 1px rgba(255,255,255,.4)"></div><svg class="a" style="left:614px;top:81.5px" width="12" height="10"><path d="M2 1.5L10 8.5M10 1.5L2 8.5" stroke="#444" stroke-width="3.4"/><path d="M2 1.5L10 8.5M10 1.5L2 8.5" stroke="#fff" stroke-width="2"/></svg><div class="a" style="left:277px;top:102px;width:6.5px;height:675px;background:linear-gradient(90deg,#1e3030 0 0.8px,#a8d8d8 0.8px 2.6px,#70b0b0 2.6px 4.2px,#98cccc 4.2px 5.6px,#2a4040 5.6px 6.5px)"></div><div class="a" style="left:638.5px;top:102px;width:7px;height:675px;background:linear-gradient(90deg,#2a4040 0 1px,#b8e4e4 1px 2.2px,#7ab8b8 2.2px 5px,#d8f8f8 5px 6.2px,#0a0a0a 6.2px 7px)"></div><div class="a" style="left:283px;top:776px;width:356px;height:6.5px;background:linear-gradient(180deg,#2a4040 0 0.8px,#b0e0e0 0.8px 2.2px,#5a9a98 2.2px 4.5px,#b8e4e4 4.5px 5.8px,#1e2e2e 5.8px 6.5px)"></div><div class="a" style="left:282.5px;top:102px;width:356px;height:675px;background:#4a4a4a;border:1px solid #3a5050;box-shadow:0 0 0 1px rgba(255,255,255,.35)"></div><div class="t" style="left:290.5px;top:107.5px;color:#d4d4d4;">Display</div><div class="t" style="left:331.8px;top:107.5px;color:#d4d4d4;">Show</div><div class="t" style="left:365.8px;top:107.5px;color:#d4d4d4;">Help</div><div class="a" style="left:284px;top:121px;width:353px;height:1px;background:#3c3c3c"></div><svg class="a" style="left:286px;top:123px" width="16" height="16"><path d="M3 3L6 2M10 2L13 3M3 13L6 14M10 14L13 13M2 5V11M14 5V11" stroke="#5a5a5a" stroke-width="1.4"/><path d="M9 4L13 8L9 12Z" fill="#525252"/><path d="M3 6L6 8L3 10Z" fill="#525252"/></svg><div class="a" style="left:305.5px;top:122.5px;width:331px;height:14.5px;background:#2b2b2b;border-radius:2px"></div><div class="a" style="left:284.5px;top:142px;width:339px;height:614.5px;background:#2b2b2b"></div><div class="a" style="left:285.5px;top:208.86679999999998px;width:337.5px;height:16.6px;background:#4e5a68"></div><div class="a" style="left:285.5px;top:225.53349999999998px;width:337.5px;height:16.6px;background:#6a8eb6"></div><svg class="a" style="left:0;top:0" width="640" height="780"><path d="M340.2 217.2 V433.8 M356.9 233.8 V317.2 M340.2 233.8 H354.7 M373.5 250.5 V300.5 M356.9 250.5 H371.3 M390.2 267.2 V283.8 M373.5 267.2 H388.0 M390.2 283.8 H404.7 M373.5 300.5 H388.0 M356.9 317.2 H371.3 M356.9 333.8 V417.2 M340.2 333.8 H354.7 M373.5 350.5 V400.5 M356.9 350.5 H371.3 M390.2 367.2 V383.8 M373.5 367.2 H388.0 M390.2 383.8 H404.7 M373.5 400.5 H388.0 M356.9 417.2 H371.3 M356.9 433.8 V550.5 M340.2 433.8 H354.7 M373.5 450.5 V500.5 M356.9 450.5 H371.3 M390.2 467.2 V483.8 M373.5 467.2 H388.0 M390.2 483.8 H404.7 M373.5 500.5 H388.0 M373.5 517.2 V533.8 M356.9 517.2 H371.3 M373.5 533.8 H388.0 M356.9 550.5 H371.3 M340.2 567.2 V600.5 M340.2 583.8 H354.7 M356.9 600.5 V683.8 M340.2 600.5 H354.7 M373.5 617.2 V633.8 M356.9 617.2 H371.3 M373.5 633.8 H388.0 M373.5 650.5 V667.2 M356.9 650.5 H371.3 M373.5 667.2 H388.0 M373.5 683.8 V700.5 M356.9 683.8 H371.3 M373.5 700.5 H388.0" stroke="#b8b8b8" stroke-width="1.1" fill="none"/><circle cx="340.2" cy="217.2" r="2.2" fill="none" stroke="#b8b8b8" stroke-width="1.1"/><circle cx="356.9" cy="233.8" r="2.2" fill="none" stroke="#b8b8b8" stroke-width="1.1"/><circle cx="373.5" cy="250.5" r="2.2" fill="none" stroke="#b8b8b8" stroke-width="1.1"/><circle cx="390.2" cy="267.2" r="2.2" fill="none" stroke="#b8b8b8" stroke-width="1.1"/><circle cx="406.9" cy="283.8" r="2.2" fill="none" stroke="#b8b8b8" stroke-width="1.1"/><circle cx="390.2" cy="300.5" r="2.2" fill="none" stroke="#b8b8b8" stroke-width="1.1"/><circle cx="373.5" cy="317.2" r="2.2" fill="none" stroke="#b8b8b8" stroke-width="1.1"/><circle cx="356.9" cy="333.8" r="2.2" fill="none" stroke="#b8b8b8" stroke-width="1.1"/><circle cx="373.5" cy="350.5" r="2.2" fill="none" stroke="#b8b8b8" stroke-width="1.1"/><circle cx="390.2" cy="367.2" r="2.2" fill="none" stroke="#b8b8b8" stroke-width="1.1"/><circle cx="406.9" cy="383.8" r="2.2" fill="none" stroke="#b8b8b8" stroke-width="1.1"/><circle cx="390.2" cy="400.5" r="2.2" fill="none" stroke="#b8b8b8" stroke-width="1.1"/><circle cx="373.5" cy="417.2" r="2.2" fill="none" stroke="#b8b8b8" stroke-width="1.1"/><circle cx="356.9" cy="433.8" r="2.2" fill="none" stroke="#b8b8b8" stroke-width="1.1"/><circle cx="373.5" cy="450.5" r="2.2" fill="none" stroke="#b8b8b8" stroke-width="1.1"/><circle cx="390.2" cy="467.2" r="2.2" fill="none" stroke="#b8b8b8" stroke-width="1.1"/><circle cx="406.9" cy="483.8" r="2.2" fill="none" stroke="#b8b8b8" stroke-width="1.1"/><circle cx="390.2" cy="500.5" r="2.2" fill="none" stroke="#b8b8b8" stroke-width="1.1"/><circle cx="373.5" cy="517.2" r="2.2" fill="none" stroke="#b8b8b8" stroke-width="1.1"/><circle cx="390.2" cy="533.8" r="2.2" fill="none" stroke="#b8b8b8" stroke-width="1.1"/><circle cx="373.5" cy="550.5" r="2.2" fill="none" stroke="#b8b8b8" stroke-width="1.1"/><circle cx="340.2" cy="567.2" r="2.2" fill="none" stroke="#b8b8b8" stroke-width="1.1"/><circle cx="356.9" cy="583.8" r="2.2" fill="none" stroke="#b8b8b8" stroke-width="1.1"/><circle cx="356.9" cy="600.5" r="2.2" fill="none" stroke="#b8b8b8" stroke-width="1.1"/><circle cx="373.5" cy="617.2" r="2.2" fill="none" stroke="#b8b8b8" stroke-width="1.1"/><circle cx="390.2" cy="633.8" r="2.2" fill="none" stroke="#b8b8b8" stroke-width="1.1"/><circle cx="373.5" cy="650.5" r="2.2" fill="none" stroke="#b8b8b8" stroke-width="1.1"/><circle cx="390.2" cy="667.2" r="2.2" fill="none" stroke="#b8b8b8" stroke-width="1.1"/><circle cx="373.5" cy="683.8" r="2.2" fill="none" stroke="#b8b8b8" stroke-width="1.1"/><circle cx="390.2" cy="700.5" r="2.2" fill="none" stroke="#b8b8b8" stroke-width="1.1"/></svg><svg class="a" style="left:321px;top:142.5px" width="16" height="16"><circle cx="5" cy="6" r="3.6" fill="#bbb" stroke="#111" stroke-width="1.1"/><circle cx="10.5" cy="4.8" r="3.6" fill="#bbb" stroke="#111" stroke-width="1.1"/><circle cx="5" cy="6" r="1.3" fill="none" stroke="#555" stroke-width=".8"/><circle cx="10.5" cy="4.8" r="1.3" fill="none" stroke="#555" stroke-width=".8"/><path d="M4 11.5Q8 9 13 11L12.5 14Q8 15.5 5 14Z" fill="#0a0a0a"/></svg><div class="t" style="left:346px;top:145.5px;color:#7a7a7a;font-size:10px;letter-spacing:-0.62px;">persp</div><svg class="a" style="left:321px;top:159.1667px" width="16" height="16"><circle cx="5" cy="6" r="3.6" fill="#bbb" stroke="#111" stroke-width="1.1"/><circle cx="10.5" cy="4.8" r="3.6" fill="#bbb" stroke="#111" stroke-width="1.1"/><circle cx="5" cy="6" r="1.3" fill="none" stroke="#555" stroke-width=".8"/><circle cx="10.5" cy="4.8" r="1.3" fill="none" stroke="#555" stroke-width=".8"/><path d="M4 11.5Q8 9 13 11L12.5 14Q8 15.5 5 14Z" fill="#0a0a0a"/></svg><div class="t" style="left:346px;top:162.1667px;color:#7a7a7a;font-size:10px;letter-spacing:-0.62px;">top</div><svg class="a" style="left:321px;top:175.83339999999998px" width="16" height="16"><circle cx="5" cy="6" r="3.6" fill="#bbb" stroke="#111" stroke-width="1.1"/><circle cx="10.5" cy="4.8" r="3.6" fill="#bbb" stroke="#111" stroke-width="1.1"/><circle cx="5" cy="6" r="1.3" fill="none" stroke="#555" stroke-width=".8"/><circle cx="10.5" cy="4.8" r="1.3" fill="none" stroke="#555" stroke-width=".8"/><path d="M4 11.5Q8 9 13 11L12.5 14Q8 15.5 5 14Z" fill="#0a0a0a"/></svg><div class="t" style="left:346px;top:178.83339999999998px;color:#7a7a7a;font-size:10px;letter-spacing:-0.62px;">front</div><svg class="a" style="left:321px;top:192.5001px" width="16" height="16"><circle cx="5" cy="6" r="3.6" fill="#bbb" stroke="#111" stroke-width="1.1"/><circle cx="10.5" cy="4.8" r="3.6" fill="#bbb" stroke="#111" stroke-width="1.1"/><circle cx="5" cy="6" r="1.3" fill="none" stroke="#555" stroke-width=".8"/><circle cx="10.5" cy="4.8" r="1.3" fill="none" stroke="#555" stroke-width=".8"/><path d="M4 11.5Q8 9 13 11L12.5 14Q8 15.5 5 14Z" fill="#0a0a0a"/></svg><div class="t" style="left:346px;top:195.5001px;color:#7a7a7a;font-size:10px;letter-spacing:-0.62px;">side</div><div class="a" style="left:287px;top:212px;width:11px;height:11px;border:1px solid #a8a8a8;background:#3a3a3a;border-radius:1px"></div><div class="a" style="left:289px;top:217px;width:7px;height:1px;background:#d0d0d0"></div><svg class="a" style="left:321px;top:209.1668px" width="16" height="16"><path d="M4 1.5H15L12 14.5H1Z" fill="#f4f4f4" stroke="#888" stroke-width=".6"/><path d="M3 9.5L11 6" stroke="#d02020" stroke-width="1.6"/><path d="M9 4L13 5.5L10 8.5Z" fill="#d02020"/></svg><div class="t" style="left:346.0px;top:212.1668px;color:#dedede;font-size:10px;letter-spacing:-0.62px;">Spine_Rig_Grp</div><div class="a" style="left:287px;top:229px;width:11px;height:11px;border:1px solid #a8a8a8;background:#3a3a3a;border-radius:1px"></div><div class="a" style="left:289px;top:234px;width:7px;height:1px;background:#d0d0d0"></div><svg class="a" style="left:321px;top:225.8335px" width="16" height="16"><path d="M8 1.5V14.5M2 5L14 11M14 5L2 11" stroke="#2ab82a" stroke-width="1.8"/></svg><div class="t" style="left:362.6667px;top:228.8335px;color:#f4f4f4;font-size:10px;letter-spacing:-0.62px;">Upper_Loc_Pos</div><div class="a" style="left:287px;top:246px;width:11px;height:11px;border:1px solid #a8a8a8;background:#3a3a3a;border-radius:1px"></div><div class="a" style="left:289px;top:251px;width:7px;height:1px;background:#d0d0d0"></div><svg class="a" style="left:321px;top:242.5002px" width="16" height="16"><path d="M8 1.5V14.5M2 5L14 11M14 5L2 11" stroke="#2ab82a" stroke-width="1.8"/></svg><div class="t" style="left:379.3334px;top:245.5002px;color:#dedede;font-size:10px;letter-spacing:-0.62px;">Upper_Loc_Aim</div><div class="a" style="left:287px;top:262px;width:11px;height:11px;border:1px solid #a8a8a8;background:#3a3a3a;border-radius:1px"></div><div class="a" style="left:289px;top:267px;width:7px;height:1px;background:#d0d0d0"></div><svg class="a" style="left:321px;top:259.1669px" width="16" height="16"><path d="M4.5 4V12M4.5 4L11.5 7.5" stroke="#b8d4ec" stroke-width="1.6"/><circle cx="4.5" cy="3.5" r="2.6" fill="#a8cef0" stroke="#4a6a88" stroke-width=".6"/><circle cx="4.5" cy="12.5" r="2.6" fill="#a8cef0" stroke="#4a6a88" stroke-width=".6"/><circle cx="12" cy="7.5" r="2.6" fill="#a8cef0" stroke="#4a6a88" stroke-width=".6"/><circle cx="4.5" cy="3.5" r="1" fill="#2a3a4a"/><circle cx="4.5" cy="12.5" r="1" fill="#2a3a4a"/><circle cx="12" cy="7.5" r="1" fill="#2a3a4a"/></svg><div class="t" style="left:396.0001px;top:262.1669px;color:#dedede;font-size:10px;letter-spacing:-0.62px;">Upper_Jnt_01</div><svg class="a" style="left:321px;top:275.8336px" width="16" height="16"><path d="M4.5 4V12M4.5 4L11.5 7.5" stroke="#b8d4ec" stroke-width="1.6"/><circle cx="4.5" cy="3.5" r="2.6" fill="#a8cef0" stroke="#4a6a88" stroke-width=".6"/><circle cx="4.5" cy="12.5" r="2.6" fill="#a8cef0" stroke="#4a6a88" stroke-width=".6"/><circle cx="12" cy="7.5" r="2.6" fill="#a8cef0" stroke="#4a6a88" stroke-width=".6"/><circle cx="4.5" cy="3.5" r="1" fill="#2a3a4a"/><circle cx="4.5" cy="12.5" r="1" fill="#2a3a4a"/><circle cx="12" cy="7.5" r="1" fill="#2a3a4a"/></svg><div class="t" style="left:412.66679999999997px;top:278.8336px;color:#dedede;font-size:10px;letter-spacing:-0.62px;">Upper_Jnt_02</div><svg class="a" style="left:321px;top:292.5003px" width="16" height="16"><path d="M6.3 2.2A1.7 1.7 0 0 1 9.7 2.2L8.7 10.5H7.3Z" fill="#d82a3a"/><circle cx="8" cy="13.3" r="1.5" fill="#d82a3a"/></svg><div class="t" style="left:396.0001px;top:295.5003px;color:#dedede;font-size:10px;letter-spacing:-0.62px;">Upper_Loc_Aim_aimConstraint1</div><svg class="a" style="left:321px;top:309.167px" width="16" height="16"><path d="M8 1.5V14.5M2 5L14 11M14 5L2 11" stroke="#2ab82a" stroke-width="1.8"/></svg><div class="t" style="left:379.3334px;top:312.167px;color:#dedede;font-size:10px;letter-spacing:-0.62px;">Upper_Loc_Aim_Up</div><div class="a" style="left:287px;top:329px;width:11px;height:11px;border:1px solid #a8a8a8;background:#3a3a3a;border-radius:1px"></div><div class="a" style="left:289px;top:334px;width:7px;height:1px;background:#d0d0d0"></div><svg class="a" style="left:321px;top:325.8337px" width="16" height="16"><path d="M8 1.5V14.5M2 5L14 11M14 5L2 11" stroke="#2ab82a" stroke-width="1.8"/></svg><div class="t" style="left:362.6667px;top:328.8337px;color:#dedede;font-size:10px;letter-spacing:-0.62px;">Lower_Loc_Pos</div><div class="a" style="left:287px;top:346px;width:11px;height:11px;border:1px solid #a8a8a8;background:#3a3a3a;border-radius:1px"></div><div class="a" style="left:289px;top:351px;width:7px;height:1px;background:#d0d0d0"></div><svg class="a" style="left:321px;top:342.5004px" width="16" height="16"><path d="M8 1.5V14.5M2 5L14 11M14 5L2 11" stroke="#2ab82a" stroke-width="1.8"/></svg><div class="t" style="left:379.3334px;top:345.5004px;color:#dedede;font-size:10px;letter-spacing:-0.62px;">Lower_Loc_Aim</div><div class="a" style="left:287px;top:362px;width:11px;height:11px;border:1px solid #a8a8a8;background:#3a3a3a;border-radius:1px"></div><div class="a" style="left:289px;top:367px;width:7px;height:1px;background:#d0d0d0"></div><svg class="a" style="left:321px;top:359.1671px" width="16" height="16"><path d="M4.5 4V12M4.5 4L11.5 7.5" stroke="#b8d4ec" stroke-width="1.6"/><circle cx="4.5" cy="3.5" r="2.6" fill="#a8cef0" stroke="#4a6a88" stroke-width=".6"/><circle cx="4.5" cy="12.5" r="2.6" fill="#a8cef0" stroke="#4a6a88" stroke-width=".6"/><circle cx="12" cy="7.5" r="2.6" fill="#a8cef0" stroke="#4a6a88" stroke-width=".6"/><circle cx="4.5" cy="3.5" r="1" fill="#2a3a4a"/><circle cx="4.5" cy="12.5" r="1" fill="#2a3a4a"/><circle cx="12" cy="7.5" r="1" fill="#2a3a4a"/></svg><div class="t" style="left:396.0001px;top:362.1671px;color:#dedede;font-size:10px;letter-spacing:-0.62px;">Lower_Jnt_01</div><svg class="a" style="left:321px;top:375.8338px" width="16" height="16"><path d="M4.5 4V12M4.5 4L11.5 7.5" stroke="#b8d4ec" stroke-width="1.6"/><circle cx="4.5" cy="3.5" r="2.6" fill="#a8cef0" stroke="#4a6a88" stroke-width=".6"/><circle cx="4.5" cy="12.5" r="2.6" fill="#a8cef0" stroke="#4a6a88" stroke-width=".6"/><circle cx="12" cy="7.5" r="2.6" fill="#a8cef0" stroke="#4a6a88" stroke-width=".6"/><circle cx="4.5" cy="3.5" r="1" fill="#2a3a4a"/><circle cx="4.5" cy="12.5" r="1" fill="#2a3a4a"/><circle cx="12" cy="7.5" r="1" fill="#2a3a4a"/></svg><div class="t" style="left:412.66679999999997px;top:378.8338px;color:#dedede;font-size:10px;letter-spacing:-0.62px;">Lower_Jnt_02</div><svg class="a" style="left:321px;top:392.5005px" width="16" height="16"><path d="M6.3 2.2A1.7 1.7 0 0 1 9.7 2.2L8.7 10.5H7.3Z" fill="#d82a3a"/><circle cx="8" cy="13.3" r="1.5" fill="#d82a3a"/></svg><div class="t" style="left:396.0001px;top:395.5005px;color:#dedede;font-size:10px;letter-spacing:-0.62px;">Lower_Loc_Aim_aimConstraint1</div><svg class="a" style="left:321px;top:409.1672px" width="16" height="16"><path d="M8 1.5V14.5M2 5L14 11M14 5L2 11" stroke="#2ab82a" stroke-width="1.8"/></svg><div class="t" style="left:379.3334px;top:412.1672px;color:#dedede;font-size:10px;letter-spacing:-0.62px;">Lower_Loc_Aim_Up</div><div class="a" style="left:287px;top:429px;width:11px;height:11px;border:1px solid #a8a8a8;background:#3a3a3a;border-radius:1px"></div><div class="a" style="left:289px;top:434px;width:7px;height:1px;background:#d0d0d0"></div><svg class="a" style="left:321px;top:425.83389999999997px" width="16" height="16"><path d="M8 1.5V14.5M2 5L14 11M14 5L2 11" stroke="#2ab82a" stroke-width="1.8"/></svg><div class="t" style="left:362.6667px;top:428.83389999999997px;color:#dedede;font-size:10px;letter-spacing:-0.62px;">Middle_Loc_Pos</div><div class="a" style="left:287px;top:446px;width:11px;height:11px;border:1px solid #a8a8a8;background:#3a3a3a;border-radius:1px"></div><div class="a" style="left:289px;top:451px;width:7px;height:1px;background:#d0d0d0"></div><svg class="a" style="left:321px;top:442.50059999999996px" width="16" height="16"><path d="M8 1.5V14.5M2 5L14 11M14 5L2 11" stroke="#2ab82a" stroke-width="1.8"/></svg><div class="t" style="left:379.3334px;top:445.50059999999996px;color:#dedede;font-size:10px;letter-spacing:-0.62px;">Middle_Loc_Aim</div><div class="a" style="left:287px;top:462px;width:11px;height:11px;border:1px solid #a8a8a8;background:#3a3a3a;border-radius:1px"></div><div class="a" style="left:289px;top:467px;width:7px;height:1px;background:#d0d0d0"></div><svg class="a" style="left:321px;top:459.16729999999995px" width="16" height="16"><path d="M8 1.5V14.5M2 5L14 11M14 5L2 11" stroke="#2ab82a" stroke-width="1.8"/></svg><div class="t" style="left:396.0001px;top:462.16729999999995px;color:#dedede;font-size:10px;letter-spacing:-0.62px;">Middle_Loc_Offset</div><svg class="a" style="left:321px;top:475.83399999999995px" width="16" height="16"><path d="M4.5 4V12M4.5 4L11.5 7.5" stroke="#b8d4ec" stroke-width="1.6"/><circle cx="4.5" cy="3.5" r="2.6" fill="#a8cef0" stroke="#4a6a88" stroke-width=".6"/><circle cx="4.5" cy="12.5" r="2.6" fill="#a8cef0" stroke="#4a6a88" stroke-width=".6"/><circle cx="12" cy="7.5" r="2.6" fill="#a8cef0" stroke="#4a6a88" stroke-width=".6"/><circle cx="4.5" cy="3.5" r="1" fill="#2a3a4a"/><circle cx="4.5" cy="12.5" r="1" fill="#2a3a4a"/><circle cx="12" cy="7.5" r="1" fill="#2a3a4a"/></svg><div class="t" style="left:412.66679999999997px;top:478.83399999999995px;color:#dedede;font-size:10px;letter-spacing:-0.62px;">Middle_Jnt_01</div><svg class="a" style="left:321px;top:492.5007px" width="16" height="16"><path d="M6.3 2.2A1.7 1.7 0 0 1 9.7 2.2L8.7 10.5H7.3Z" fill="#d82a3a"/><circle cx="8" cy="13.3" r="1.5" fill="#d82a3a"/></svg><div class="t" style="left:396.0001px;top:495.5007px;color:#dedede;font-size:10px;letter-spacing:-0.62px;">Middle_Loc_Aim_aimConstraint1</div><div class="a" style="left:287px;top:512px;width:11px;height:11px;border:1px solid #a8a8a8;background:#3a3a3a;border-radius:1px"></div><div class="a" style="left:289px;top:517px;width:7px;height:1px;background:#d0d0d0"></div><svg class="a" style="left:321px;top:509.16740000000004px" width="16" height="16"><path d="M8 1.5V14.5M2 5L14 11M14 5L2 11" stroke="#2ab82a" stroke-width="1.8"/></svg><div class="t" style="left:379.3334px;top:512.1674px;color:#dedede;font-size:10px;letter-spacing:-0.62px;">Middle_Loc_Aim_Up</div><svg class="a" style="left:321px;top:525.8341px" width="16" height="16"><path d="M6.3 2.2A1.7 1.7 0 0 1 9.7 2.2L8.7 10.5H7.3Z" fill="#d82a3a"/><circle cx="8" cy="13.3" r="1.5" fill="#d82a3a"/></svg><div class="t" style="left:396.0001px;top:528.8341px;color:#dedede;font-size:10px;letter-spacing:-0.62px;">Middle_Loc_Aim_Up_pointConstraint1</div><svg class="a" style="left:321px;top:542.5008px" width="16" height="16"><path d="M6.3 2.2A1.7 1.7 0 0 1 9.7 2.2L8.7 10.5H7.3Z" fill="#d82a3a"/><circle cx="8" cy="13.3" r="1.5" fill="#d82a3a"/></svg><div class="t" style="left:379.3334px;top:545.5008px;color:#dedede;font-size:10px;letter-spacing:-0.62px;">Middle_Loc_Pos_pointConstraint1</div><div class="a" style="left:287px;top:562px;width:11px;height:11px;border:1px solid #a8a8a8;background:#3a3a3a;border-radius:1px"></div><div class="a" style="left:289px;top:567px;width:7px;height:1px;background:#d0d0d0"></div><svg class="a" style="left:321px;top:559.1675px" width="16" height="16"><path d="M4 1.5H15L12 14.5H1Z" fill="#f4f4f4" stroke="#888" stroke-width=".6"/><path d="M3 9.5L11 6" stroke="#d02020" stroke-width="1.6"/><path d="M9 4L13 5.5L10 8.5Z" fill="#d02020"/></svg><div class="t" style="left:346.0px;top:562.1675px;color:#dedede;font-size:10px;letter-spacing:-0.62px;">Spine_Misc_Grp</div><svg class="a" style="left:321px;top:575.8342px" width="16" height="16"><path d="M5 1H15Q12 8 12 14H1Q3 8 5 1Z" fill="#5a9ae0" stroke="#2a5a9a" stroke-width=".6"/><path d="M6 2Q4 8 3 13" stroke="#bfe0ff" stroke-width="1.2" fill="none"/></svg><div class="t" style="left:362.6667px;top:578.8342px;color:#dedede;font-size:10px;letter-spacing:-0.62px;">Ribbon_Spine_Geo</div><div class="a" style="left:287px;top:596px;width:11px;height:11px;border:1px solid #a8a8a8;background:#3a3a3a;border-radius:1px"></div><div class="a" style="left:289px;top:601px;width:7px;height:1px;background:#d0d0d0"></div><svg class="a" style="left:321px;top:592.5009px" width="16" height="16"><path d="M4 1.5H15L12 14.5H1Z" fill="#f4f4f4" stroke="#888" stroke-width=".6"/><path d="M3 9.5L11 6" stroke="#d02020" stroke-width="1.6"/><path d="M9 4L13 5.5L10 8.5Z" fill="#d02020"/></svg><div class="t" style="left:362.6667px;top:595.5009px;color:#dedede;font-size:10px;letter-spacing:-0.62px;">Ribbon_Fol_Grp</div><div class="a" style="left:287px;top:612px;width:11px;height:11px;border:1px solid #a8a8a8;background:#3a3a3a;border-radius:1px"></div><div class="a" style="left:289px;top:617px;width:7px;height:1px;background:#d0d0d0"></div><svg class="a" style="left:321px;top:609.1676px" width="16" height="16"><path d="M2 4L6 1V12L2 14Z" fill="#6a6a6a"/><path d="M4 5L8 2V13L4 15Z" fill="#8a8a8a"/><path d="M6 6L14 3V12L6 15Z" fill="#c8c8c8" stroke="#555" stroke-width=".6"/><path d="M7 9L13 7" stroke="#777" stroke-width=".8"/></svg><div class="t" style="left:379.3334px;top:612.1676px;color:#dedede;font-size:10px;letter-spacing:-0.62px;">Ribbon_Fol_1</div><svg class="a" style="left:321px;top:625.8343px" width="16" height="16"><path d="M4.5 4V12M4.5 4L11.5 7.5" stroke="#b8d4ec" stroke-width="1.6"/><circle cx="4.5" cy="3.5" r="2.6" fill="#a8cef0" stroke="#4a6a88" stroke-width=".6"/><circle cx="4.5" cy="12.5" r="2.6" fill="#a8cef0" stroke="#4a6a88" stroke-width=".6"/><circle cx="12" cy="7.5" r="2.6" fill="#a8cef0" stroke="#4a6a88" stroke-width=".6"/><circle cx="4.5" cy="3.5" r="1" fill="#2a3a4a"/><circle cx="4.5" cy="12.5" r="1" fill="#2a3a4a"/><circle cx="12" cy="7.5" r="1" fill="#2a3a4a"/></svg><div class="t" style="left:396.0001px;top:628.8343px;color:#dedede;font-size:10px;letter-spacing:-0.62px;">Spine_BIND_jnt_01</div><div class="a" style="left:287px;top:646px;width:11px;height:11px;border:1px solid #a8a8a8;background:#3a3a3a;border-radius:1px"></div><div class="a" style="left:289px;top:651px;width:7px;height:1px;background:#d0d0d0"></div><svg class="a" style="left:321px;top:642.501px" width="16" height="16"><path d="M2 4L6 1V12L2 14Z" fill="#6a6a6a"/><path d="M4 5L8 2V13L4 15Z" fill="#8a8a8a"/><path d="M6 6L14 3V12L6 15Z" fill="#c8c8c8" stroke="#555" stroke-width=".6"/><path d="M7 9L13 7" stroke="#777" stroke-width=".8"/></svg><div class="t" style="left:379.3334px;top:645.501px;color:#dedede;font-size:10px;letter-spacing:-0.62px;">Ribbon_Fol_2</div><svg class="a" style="left:321px;top:659.1677px" width="16" height="16"><path d="M4.5 4V12M4.5 4L11.5 7.5" stroke="#b8d4ec" stroke-width="1.6"/><circle cx="4.5" cy="3.5" r="2.6" fill="#a8cef0" stroke="#4a6a88" stroke-width=".6"/><circle cx="4.5" cy="12.5" r="2.6" fill="#a8cef0" stroke="#4a6a88" stroke-width=".6"/><circle cx="12" cy="7.5" r="2.6" fill="#a8cef0" stroke="#4a6a88" stroke-width=".6"/><circle cx="4.5" cy="3.5" r="1" fill="#2a3a4a"/><circle cx="4.5" cy="12.5" r="1" fill="#2a3a4a"/><circle cx="12" cy="7.5" r="1" fill="#2a3a4a"/></svg><div class="t" style="left:396.0001px;top:662.1677px;color:#dedede;font-size:10px;letter-spacing:-0.62px;">Spine_BIND_jnt_02</div><div class="a" style="left:287px;top:679px;width:11px;height:11px;border:1px solid #a8a8a8;background:#3a3a3a;border-radius:1px"></div><div class="a" style="left:289px;top:684px;width:7px;height:1px;background:#d0d0d0"></div><svg class="a" style="left:321px;top:675.8344px" width="16" height="16"><path d="M2 4L6 1V12L2 14Z" fill="#6a6a6a"/><path d="M4 5L8 2V13L4 15Z" fill="#8a8a8a"/><path d="M6 6L14 3V12L6 15Z" fill="#c8c8c8" stroke="#555" stroke-width=".6"/><path d="M7 9L13 7" stroke="#777" stroke-width=".8"/></svg><div class="t" style="left:379.3334px;top:678.8344px;color:#dedede;font-size:10px;letter-spacing:-0.62px;">Ribbon_Fol_3</div><svg class="a" style="left:321px;top:692.5011px" width="16" height="16"><path d="M4.5 4V12M4.5 4L11.5 7.5" stroke="#b8d4ec" stroke-width="1.6"/><circle cx="4.5" cy="3.5" r="2.6" fill="#a8cef0" stroke="#4a6a88" stroke-width=".6"/><circle cx="4.5" cy="12.5" r="2.6" fill="#a8cef0" stroke="#4a6a88" stroke-width=".6"/><circle cx="12" cy="7.5" r="2.6" fill="#a8cef0" stroke="#4a6a88" stroke-width=".6"/><circle cx="4.5" cy="3.5" r="1" fill="#2a3a4a"/><circle cx="4.5" cy="12.5" r="1" fill="#2a3a4a"/><circle cx="12" cy="7.5" r="1" fill="#2a3a4a"/></svg><div class="t" style="left:396.0001px;top:695.5011px;color:#dedede;font-size:10px;letter-spacing:-0.62px;">Spine_BIND_jnt_03</div><svg class="a" style="left:321px;top:709.1677999999999px" width="16" height="16"><defs><radialGradient id="gs" cx=".35" cy=".35" r=".7"><stop offset="0" stop-color="#f4ecc0"/><stop offset="1" stop-color="#7a6a30"/></radialGradient></defs><circle cx="8" cy="8" r="7" fill="#1e2a34" stroke="#a0a0a0" stroke-width="1"/><path d="M7 3L13.5 4.5L11 10Z" fill="#6a9ad0"/><circle cx="6" cy="10" r="3.6" fill="url(#gs)"/></svg><div class="t" style="left:346px;top:712.1677999999999px;color:#dcdcdc;font-size:10px;letter-spacing:-0.4px;">defaultLightSet</div><svg class="a" style="left:321px;top:725.8344999999999px" width="16" height="16"><defs><radialGradient id="gs" cx=".35" cy=".35" r=".7"><stop offset="0" stop-color="#f4ecc0"/><stop offset="1" stop-color="#7a6a30"/></radialGradient></defs><circle cx="8" cy="8" r="7" fill="#1e2a34" stroke="#a0a0a0" stroke-width="1"/><path d="M7 3L13.5 4.5L11 10Z" fill="#6a9ad0"/><circle cx="6" cy="10" r="3.6" fill="url(#gs)"/></svg><div class="t" style="left:346px;top:728.8344999999999px;color:#dcdcdc;font-size:10px;letter-spacing:-0.4px;">defaultObjectSet</div><div class="a" style="left:623.5px;top:142px;width:13.5px;height:613px;background:linear-gradient(90deg,#555,#6a6a6a)"></div><div class="a" style="left:623.5px;top:142px;width:13.5px;height:14px;background:#5a5a5a;border:1px solid #3a3a3a"></div><svg class="a" style="left:626px;top:146px" width="9" height="6"><path d="M0 5.5H9L4.5 0.5Z" fill="#eee"/></svg><div class="a" style="left:626px;top:424px;width:9px;height:16px;background:radial-gradient(circle at 1px 1px,#8a8a8a 0.7px,transparent 1px) 0 0/2px 2px;opacity:.7"></div><div class="a" style="left:623.5px;top:712px;width:13.5px;height:17.5px;background:repeating-conic-gradient(#4a4a4a 0 25%,#3a3a3a 0 50%) 0 0/2px 2px"></div><div class="a" style="left:624px;top:730px;width:12.5px;height:12px;background:#5a5a5a;border:1px solid #3a3a3a"></div><svg class="a" style="left:626px;top:733px" width="9" height="6"><path d="M0 5.5H9L4.5 0.5Z" fill="#eee"/></svg><div class="a" style="left:624px;top:743px;width:12.5px;height:12px;background:#5a5a5a;border:1px solid #3a3a3a"></div><svg class="a" style="left:626px;top:746px" width="9" height="6"><path d="M0 0.5H9L4.5 5.5Z" fill="#eee"/></svg><div class="a" style="left:284.5px;top:756.5px;width:339px;height:13px;background:#686868"></div><div class="a" style="left:285px;top:757px;width:13px;height:12px;background:#595959;border:1px solid #3a3a3a"></div><svg class="a" style="left:289px;top:759px" width="6" height="9"><path d="M5.5 0V9L0.5 4.5Z" fill="#eee"/></svg><div class="a" style="left:597px;top:757px;width:13px;height:12px;background:#595959;border:1px solid #3a3a3a"></div><svg class="a" style="left:601px;top:759px" width="6" height="9"><path d="M5.5 0V9L0.5 4.5Z" fill="#eee"/></svg><div class="a" style="left:611px;top:757px;width:12.5px;height:12px;background:#595959;border:1px solid #3a3a3a"></div><svg class="a" style="left:614px;top:759px" width="6" height="9"><path d="M0.5 0V9L5.5 4.5Z" fill="#eee"/></svg><div class="a" style="left:440px;top:759px;width:14px;height:8px;background:repeating-linear-gradient(90deg,#777 0 1px,transparent 1px 2px);opacity:.6"></div><div class="a" style="left:623.5px;top:755px;width:13.5px;height:14px;background:#2e2e2e"></div><div class="a" style="left:284px;top:769px;width:353px;height:7px;background:#555;border-bottom:1px solid #7a7a7a"></div><div class="a" style="left:400px;top:772px;width:130px;height:2px;background:repeating-linear-gradient(90deg,#6a6a6a 0 1px,transparent 1px 3px)"></div></body></html>
